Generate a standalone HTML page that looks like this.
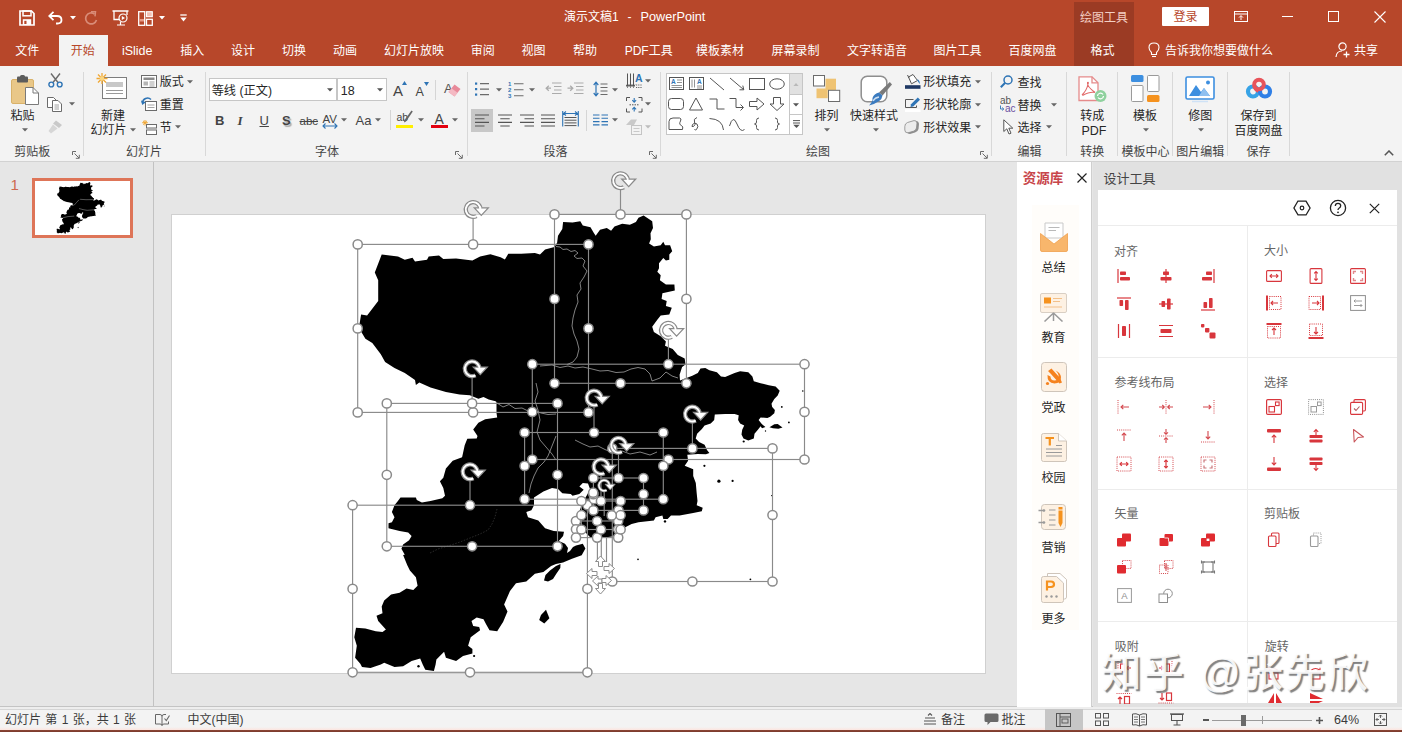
<!DOCTYPE html>
<html lang="zh-CN">
<head>
<meta charset="utf-8">
<title>演示文稿1 - PowerPoint</title>
<style>
*{box-sizing:border-box;margin:0;padding:0}
html,body{width:1402px;height:732px;overflow:hidden;background:#e6e6e6}
body{font-family:"Liberation Sans","Noto Sans CJK SC",sans-serif;font-size:12px;color:#262626;position:relative}
.abs{position:absolute}
.t{position:absolute;white-space:nowrap;line-height:1}
#titlebar{position:absolute;left:0;top:0;width:1402px;height:66px;background:#b7472a}
#ctx{position:absolute;left:1073.5px;top:2px;width:60px;height:64px;background:#9b3b24}
#tabactive{position:absolute;left:59px;top:35px;width:49px;height:32px;background:#f3f3f3}
.tab{position:absolute;top:42.6px;font-size:12px;color:#fff;white-space:nowrap;line-height:16px}
#ribbon{position:absolute;left:0;top:66px;width:1402px;height:96px;background:#f3f3f3;border-bottom:1px solid #d2d2d2}
.gsep{position:absolute;top:72px;width:1px;height:84px;background:#d9d9d9}
.glabel{position:absolute;top:143px;font-size:12.5px;color:#444;white-space:nowrap;line-height:15px}
.rt{position:absolute;font-size:12.5px;color:#262626;white-space:nowrap;line-height:15px}
#work{position:absolute;left:0;top:162px;width:1402px;height:544px;background:#e6e6e6;border-bottom:1px solid #c4c4c4;box-sizing:content-box}
#thumbsep{position:absolute;left:153px;top:162px;width:1px;height:544px;background:#c2c2c2}
#slide{position:absolute;left:171px;top:213.6px;width:815.3px;height:460.2px;background:#fff;border:1px solid #d0d0d0}
#status{position:absolute;left:0;top:707px;width:1402px;height:25px;background:#f3f3f3;border-top:2px solid #eee;box-shadow:inset 0 1px 0 #d6d6d6}
#statusline{position:absolute;left:0;top:727px;width:1402px;height:5px;background:linear-gradient(#f3f3f3 0,#fbe6e1 2.6px,#8a4535 3.2px,#7a3a2c 5px)}
#respanel{position:absolute;left:1017px;top:162px;width:75px;height:545px;background:#fff;border-right:1px solid #cfcfcf}
#dthead{position:absolute;left:1093px;top:162px;width:309px;height:545px;background:#e1e1e1}
#dtbody{position:absolute;left:1098px;top:190px;width:299px;height:513px;background:#fff}
.sec{position:absolute;font-size:12px;color:#666;white-space:nowrap;line-height:14px}
.hline{position:absolute;height:1px;background:#ececec}
.vline{position:absolute;width:1px;background:#ececec}
</style>
</head>
<body>
<!-- ===== TITLE BAR + TABS ===== -->
<div id="titlebar"></div>
<div id="ctx"></div>
<div id="tabactive"></div>
<div class="t" style="left:564px;top:9px;font-size:12px;line-height:16px;color:#fff">演示文稿1</div><div class="t" style="left:627.5px;top:9px;font-size:12px;line-height:16px;color:#fff">-</div><div class="t" style="left:640.5px;top:9px;font-size:12.7px;line-height:16px;color:#fff">PowerPoint</div>
<div class="t" style="left:1080px;top:10px;font-size:12px;line-height:16px;color:#f3cfc4">绘图工具</div>
<div class="abs" style="left:1162px;top:7px;width:47px;height:19px;background:#fff;border-radius:1px"></div>
<div class="t" style="left:1173.5px;top:8.5px;font-size:12px;line-height:16px;color:#b7472a">登录</div>
<div class="tab" style="left:15.3px">文件</div>
<div class="tab" style="left:70.7px;color:#b7472a">开始</div>
<div class="tab" style="left:121.9px;font-size:12.5px">iSlide</div>
<div class="tab" style="left:180.3px">插入</div>
<div class="tab" style="left:231px">设计</div>
<div class="tab" style="left:282px">切换</div>
<div class="tab" style="left:333px">动画</div>
<div class="tab" style="left:384.1px">幻灯片放映</div>
<div class="tab" style="left:470.7px">审阅</div>
<div class="tab" style="left:521.5px">视图</div>
<div class="tab" style="left:572.9px">帮助</div>
<div class="tab" style="left:624.7px">PDF工具</div>
<div class="tab" style="left:696px">模板素材</div>
<div class="tab" style="left:771.5px">屏幕录制</div>
<div class="tab" style="left:847px">文字转语音</div>
<div class="tab" style="left:933.5px">图片工具</div>
<div class="tab" style="left:1008.5px">百度网盘</div>
<div class="tab" style="left:1090.5px">格式</div>
<div class="tab" style="left:1165px">告诉我你想要做什么</div>
<div class="tab" style="left:1354px">共享</div>
<!-- ===== RIBBON ===== -->
<div id="ribbon"></div>
<!-- ===== WORK AREA ===== -->
<div id="work"></div>
<div id="thumbsep"></div>
<div class="t" style="left:10.5px;top:176.5px;font-size:15px;color:#cd6a4f">1</div>
<div class="abs" style="left:32px;top:178px;width:101px;height:60px;background:#fff;border:3px solid #de7558"></div>
<div id="slide"></div>
<!-- ===== RIGHT PANELS ===== -->
<div id="respanel"></div>
<div id="dthead"></div>
<div id="dtbody"></div>
<!-- ===== STATUS ===== -->
<div id="status"></div>
<div id="statusline"></div>
<!-- QAT icons -->
<svg class="abs" style="left:19px;top:10px" width="16" height="16" viewBox="0 0 16 16"><path d="M1,1 H12.5 L15,3.5 V15 H1 Z" fill="none" stroke="#fff" stroke-width="1.7"/><rect x="4" y="1" width="8" height="4.8" fill="none" stroke="#fff" stroke-width="1.5"/><rect x="3.8" y="9.2" width="8.4" height="5.8" fill="#fff"/><rect x="5.3" y="10.8" width="2.2" height="3.2" fill="#b7472a"/></svg>
<svg class="abs" style="left:48px;top:10.5px" width="15" height="14" viewBox="0 0 15 14"><path d="M1.5,5 H9 Q13.5,5 13.5,9 Q13.5,12.5 9.5,12.5 H8" fill="none" stroke="#fff" stroke-width="1.8"/><path d="M5.5,0.8 L1.2,5 L5.5,9.2" fill="none" stroke="#fff" stroke-width="1.8"/></svg>
<svg class="abs" style="left:69.5px;top:15.5px" width="6" height="4" viewBox="0 0 6 4"><path d="M0,0 H6 L3,3.6 Z" fill="#fff"/></svg>
<svg class="abs" style="left:83.5px;top:10.5px" width="15" height="14" viewBox="0 0 15 14"><path d="M10.5,3 A5.5,5.5 0 1 0 12.5,9" fill="none" stroke="#d98c78" stroke-width="1.7"/><path d="M7,0.5 L11.5,0.8 L11,5.3" fill="none" stroke="#d98c78" stroke-width="1.5"/></svg>
<svg class="abs" style="left:112px;top:10px" width="17" height="16" viewBox="0 0 17 16"><path d="M0.5,1 H16.5 M2,1 V9.5 H7 M15,1 V5" fill="none" stroke="#fff" stroke-width="1.3"/><circle cx="11" cy="8" r="4" fill="none" stroke="#fff" stroke-width="1.2"/><path d="M9.8,6 L13,8 L9.8,10 Z" fill="#fff"/><path d="M8.5,12 V14.5 M5,15 H13" stroke="#fff" stroke-width="1.2"/></svg>
<svg class="abs" style="left:138px;top:10.5px" width="15" height="15" viewBox="0 0 15 15"><rect x="0.7" y="0.7" width="6" height="13.6" fill="none" stroke="#fff" stroke-width="1.3"/><rect x="8.5" y="0.7" width="5.8" height="5" fill="#f3c0b3" stroke="#fff" stroke-width="1.1"/><rect x="8.5" y="8.3" width="5.8" height="6" fill="none" stroke="#fff" stroke-width="1.3"/><rect x="1.5" y="8" width="4.5" height="2.5" fill="#e79a86"/></svg>
<svg class="abs" style="left:159px;top:15.5px" width="6" height="4" viewBox="0 0 6 4"><path d="M0,0 H6 L3,3.6 Z" fill="#fff"/></svg>
<svg class="abs" style="left:179.5px;top:13.5px" width="7" height="8" viewBox="0 0 7 8"><path d="M0.3,1 H6.7" stroke="#fff" stroke-width="1.3"/><path d="M0.3,3.6 H6.7 L3.5,7.4 Z" fill="#fff"/></svg>
<!-- window controls -->
<svg class="abs" style="left:1234px;top:10.5px" width="14" height="11" viewBox="0 0 14 11"><rect x="0.5" y="0.5" width="13" height="10" fill="none" stroke="#fff"/><path d="M0.5,3 H13.5" stroke="#fff"/><path d="M7,9 V4.8 M5,6.6 L7,4.6 L9,6.6" fill="none" stroke="#fff"/></svg>
<div class="abs" style="left:1281.5px;top:16px;width:11px;height:1px;background:#fff"></div>
<div class="abs" style="left:1328px;top:11px;width:10.5px;height:10.5px;border:1px solid #fff"></div>
<svg class="abs" style="left:1373.5px;top:10.5px" width="12" height="12" viewBox="0 0 12 12"><path d="M0.5,0.5 L11.5,11.5 M11.5,0.5 L0.5,11.5" stroke="#fff" stroke-width="1.1"/></svg>
<!-- lightbulb -->
<svg class="abs" style="left:1147.5px;top:42px" width="12" height="16" viewBox="0 0 12 16"><path d="M3.5,10.5 Q1,8.5 1,5.6 Q1,1 6,1 Q11,1 11,5.6 Q11,8.5 8.5,10.5 V12.5 H3.5 Z" fill="none" stroke="#fff" stroke-width="1.1"/><path d="M4,14.5 H8" stroke="#fff" stroke-width="1.1"/></svg>
<!-- share person -->
<svg class="abs" style="left:1335px;top:42px" width="16" height="16" viewBox="0 0 16 16"><circle cx="7.5" cy="4.5" r="3.6" fill="none" stroke="#fff" stroke-width="1.2"/><path d="M1,15 Q1.5,9 7,9" fill="none" stroke="#fff" stroke-width="1.2"/><path d="M11.5,9.5 V15.5 M8.5,12.5 H14.5" stroke="#fff" stroke-width="1.3"/></svg>
<svg class="abs" style="left:11.0px;top:75.0px" width="28" height="30" viewBox="0 0 28 30"><rect x="0.5" y="4.5" width="22" height="24" rx="1.5" fill="#e9c788" stroke="#d9b26a"/><rect x="6" y="1.5" width="11" height="6" rx="1" fill="#5c5c5c"/><rect x="9" y="0" width="5" height="3.5" rx="1.5" fill="#5c5c5c"/><path d="M14.5,12.5 H22 L27.5,18 V29.5 H14.5 Z" fill="#fff" stroke="#7a7a7a"/><path d="M22,12.5 V18 H27.5" fill="none" stroke="#7a7a7a"/></svg>
<div class="t" style="left:10.5px;top:108.2px;font-size:12px;line-height:16px;color:#262626;">粘贴</div>
<svg class="abs" style="left:21.7px;top:128.2px" width="6" height="4" viewBox="0 0 6 4"><path d="M0,0.3 L6,0.3 L3,3.6 Z" fill="#666"/></svg>
<svg class="abs" style="left:48.0px;top:73.0px" width="15" height="15" viewBox="0 0 15 15"><path d="M3,0.5 L10,9.5 M12,0.5 L5,9.5" stroke="#6b6b6b" stroke-width="1.4" fill="none"/><circle cx="3.3" cy="11.5" r="2.4" fill="none" stroke="#2e74b5" stroke-width="1.4"/><circle cx="11.7" cy="11.5" r="2.4" fill="none" stroke="#2e74b5" stroke-width="1.4"/></svg>
<svg class="abs" style="left:47.0px;top:97.0px" width="15" height="15" viewBox="0 0 15 15"><path d="M0.5,0.5 H6.5 L9,3 V10.5 H0.5 Z" fill="#fff" stroke="#6b6b6b"/><path d="M5.5,3.5 H11 L14.5,7 V14.5 H5.5 Z" fill="#fff" stroke="#6b6b6b"/><path d="M7.5,8 H12 M7.5,10 H12 M7.5,12 H12" stroke="#8a8a8a" stroke-width="0.8"/></svg>
<svg class="abs" style="left:68.6px;top:102.4px" width="6" height="4" viewBox="0 0 6 4"><path d="M0,0.3 L6,0.3 L3,3.6 Z" fill="#666"/></svg>
<svg class="abs" style="left:48.0px;top:120.0px" width="15" height="14" viewBox="0 0 15 14"><path d="M8,0.5 L14,5 L11,8 L5,3.5 Z" fill="#c9c9c9"/><path d="M5,4.5 L9.5,8.5 L3,13.5 L0.5,11 Z" fill="#d6d6d6"/></svg>
<div class="t" style="left:14.2px;top:143.8px;font-size:12px;line-height:16px;color:#444;">剪贴板</div>
<svg class="abs" style="left:72.0px;top:151.0px" width="8" height="8" viewBox="0 0 8 8"><path d="M0.5,4 V0.5 H4 M2.5,2.5 L7,7 M7.3,3.8 V7.3 H3.8" fill="none" stroke="#6b6b6b" stroke-width="1"/></svg>
<div class="abs" style="left:83.0px;top:72px;width:1px;height:84px;background:#d8d8d8"></div>
<svg class="abs" style="left:96.0px;top:73.0px" width="32" height="28" viewBox="0 0 32 28"><rect x="6.5" y="4.5" width="24" height="21" fill="#fff" stroke="#7d7d7d"/><rect x="10" y="9" width="17" height="5" fill="#c8c8c8"/><path d="M10,17.5 H27 M10,20.5 H27" stroke="#9a9a9a"/><g stroke="#f0a733" stroke-width="1.3"><path d="M6,0 V11 M0.5,5.5 H11.5 M2,1.5 L10,9.5 M10,1.5 L2,9.5"/></g><circle cx="6" cy="5.5" r="2.2" fill="#fbd680"/></svg>
<div class="t" style="left:101.0px;top:108.2px;font-size:12px;line-height:16px;color:#262626;">新建</div>
<div class="t" style="left:90.4px;top:122.4px;font-size:12px;line-height:16px;color:#262626;">幻灯片</div>
<svg class="abs" style="left:129.6px;top:128.2px" width="6" height="4" viewBox="0 0 6 4"><path d="M0,0.3 L6,0.3 L3,3.6 Z" fill="#666"/></svg>
<svg class="abs" style="left:141.0px;top:74.5px" width="16" height="13" viewBox="0 0 16 13"><rect x="0.5" y="0.5" width="15" height="12" fill="#fff" stroke="#6b6b6b"/><rect x="2.5" y="2.5" width="11" height="2.5" fill="#8a8a8a"/><rect x="2.5" y="6.5" width="4.5" height="4" fill="#b5b5b5"/><path d="M8.5,7 H13.5 M8.5,9 H13.5 M8.5,11 H13.5" stroke="#8a8a8a" stroke-width="0.8"/></svg>
<div class="t" style="left:159.8px;top:74.2px;font-size:12px;line-height:16px;color:#262626;">版式</div>
<svg class="abs" style="left:187.2px;top:79.7px" width="6" height="4" viewBox="0 0 6 4"><path d="M0,0.3 L6,0.3 L3,3.6 Z" fill="#666"/></svg>
<svg class="abs" style="left:141.0px;top:97.0px" width="16" height="14" viewBox="0 0 16 14"><rect x="4.5" y="4.5" width="11" height="9" fill="#fff" stroke="#6b6b6b"/><path d="M6.5,8 H13.5 M6.5,10.5 H13.5" stroke="#9a9a9a" stroke-width="0.9"/><path d="M1.5,6 A5,5 0 0 1 10,2.5" fill="none" stroke="#2e74b5" stroke-width="1.5"/><path d="M0,3.5 L1.2,8 L5,5.2 Z" fill="#2e74b5"/></svg>
<div class="t" style="left:159.8px;top:97.4px;font-size:12px;line-height:16px;color:#262626;">重置</div>
<svg class="abs" style="left:142.0px;top:120.0px" width="15" height="15" viewBox="0 0 15 15"><path d="M3,0 V5.5 M0.2,2.7 H5.8 M1,0.8 L5,4.7 M5,0.8 L1,4.7" stroke="#f0a733" stroke-width="1"/><rect x="4.5" y="4.5" width="10" height="3.5" fill="#fff" stroke="#6b6b6b"/><rect x="4.5" y="10" width="10" height="4.5" fill="#fff" stroke="#6b6b6b"/></svg>
<div class="t" style="left:159.8px;top:119.9px;font-size:12px;line-height:16px;color:#262626;">节</div>
<svg class="abs" style="left:175.2px;top:125.4px" width="6" height="4" viewBox="0 0 6 4"><path d="M0,0.3 L6,0.3 L3,3.6 Z" fill="#666"/></svg>
<div class="t" style="left:126.0px;top:143.8px;font-size:12px;line-height:16px;color:#444;">幻灯片</div>
<div class="abs" style="left:204.5px;top:72px;width:1px;height:84px;background:#d8d8d8"></div>
<div class="abs" style="left:209px;top:78px;width:128px;height:22.5px;background:#fff;border:1px solid #c6c6c6"></div>
<div class="abs" style="left:337px;top:78px;width:50px;height:22.5px;background:#fff;border:1px solid #c6c6c6;border-left:1px solid #c6c6c6"></div>
<div class="t" style="left:211.7px;top:82.7px;font-size:12.2px;line-height:16px;color:#262626;">等线 (正文)</div>
<svg class="abs" style="left:326.5px;top:88.0px" width="6" height="4" viewBox="0 0 6 4"><path d="M0,0.3 L6,0.3 L3,3.6 Z" fill="#555"/></svg>
<div class="t" style="left:340.7px;top:82.7px;font-size:12.5px;line-height:16px;color:#262626;">18</div>
<svg class="abs" style="left:376.5px;top:88.0px" width="6" height="4" viewBox="0 0 6 4"><path d="M0,0.3 L6,0.3 L3,3.6 Z" fill="#555"/></svg>
<div class="t" style="left:215.0px;top:112.9px;font-size:13px;line-height:16px;color:#444;font-weight:bold">B</div>
<div class="t" style="left:237.5px;top:112.9px;font-size:13px;line-height:16px;color:#444;font-style:italic;font-family:'Liberation Serif',serif;font-weight:bold">I</div>
<div class="t" style="left:259.5px;top:112.9px;font-size:13px;line-height:16px;color:#444;text-decoration:underline">U</div>
<div class="t" style="left:282.0px;top:112.9px;font-size:13px;line-height:16px;color:#444;font-weight:bold;text-shadow:1.5px 1.5px 1px #aaa">S</div>
<div class="t" style="left:299.5px;top:112.9px;font-size:11.5px;line-height:16px;color:#444;text-decoration:line-through">abc</div>
<div class="t" style="left:322.5px;top:110.5px;font-size:11.5px;line-height:16px;color:#444;">AV</div>
<svg class="abs" style="left:322.0px;top:123.0px" width="16" height="6" viewBox="0 0 16 6"><path d="M1,3 H15 M3.5,0.5 L1,3 L3.5,5.5 M12.5,0.5 L15,3 L12.5,5.5" fill="none" stroke="#2e74b5" stroke-width="1.1"/></svg>
<svg class="abs" style="left:341.0px;top:118.0px" width="6" height="4" viewBox="0 0 6 4"><path d="M0,0.3 L6,0.3 L3,3.6 Z" fill="#666"/></svg>
<div class="t" style="left:355.5px;top:112.9px;font-size:13px;line-height:16px;color:#444;">Aa</div>
<svg class="abs" style="left:374.5px;top:118.0px" width="6" height="4" viewBox="0 0 6 4"><path d="M0,0.3 L6,0.3 L3,3.6 Z" fill="#666"/></svg>
<div class="t" style="left:393.0px;top:82.5px;font-size:15px;line-height:16px;color:#444;">A</div>
<svg class="abs" style="left:402.0px;top:81.0px" width="5" height="4" viewBox="0 0 5 4"><path d="M0,4 L2.5,0 L5,4 Z" fill="#2e74b5"/></svg>
<div class="t" style="left:415.5px;top:83.5px;font-size:12.5px;line-height:16px;color:#444;">A</div>
<svg class="abs" style="left:424.0px;top:81.5px" width="5" height="4" viewBox="0 0 5 4"><path d="M0,0 L2.5,4 L5,0 Z" fill="#2e74b5"/></svg>
<div class="abs" style="left:434.5px;top:80px;width:1px;height:20px;background:#d5d5d5"></div>
<div class="t" style="left:444.0px;top:81.0px;font-size:13px;line-height:16px;color:#555;">A</div>
<svg class="abs" style="left:448.0px;top:84.0px" width="13" height="13" viewBox="0 0 13 13"><path d="M6.5,0.5 L12.5,5 L6.5,12.5 L0.5,8 Z" fill="#e88a9a"/><path d="M0.5,8 L3.5,4.2 L9.5,8.7 L6.5,12.5 Z" fill="#f4b9c3"/></svg>
<div class="abs" style="left:390.0px;top:110px;width:1px;height:20px;background:#d5d5d5"></div>
<div class="t" style="left:396.5px;top:109.0px;font-size:10.5px;line-height:16px;color:#444;">ab</div>
<svg class="abs" style="left:403.0px;top:110.0px" width="10" height="13" viewBox="0 0 10 13"><path d="M8.5,0.5 L9.8,1.6 L3,11.5 L1,12.5 L1.3,10.2 Z" fill="#666"/></svg>
<div class="abs" style="left:395.5px;top:124.5px;width:17.5px;height:3.5px;background:#ffef00"></div>
<svg class="abs" style="left:418.4px;top:118.0px" width="6" height="4" viewBox="0 0 6 4"><path d="M0,0.3 L6,0.3 L3,3.6 Z" fill="#666"/></svg>
<div class="t" style="left:434.5px;top:110.5px;font-size:14px;line-height:16px;color:#444;">A</div>
<div class="abs" style="left:431px;top:124.5px;width:16.5px;height:3.5px;background:#e3000f"></div>
<svg class="abs" style="left:452.3px;top:118.0px" width="6" height="4" viewBox="0 0 6 4"><path d="M0,0.3 L6,0.3 L3,3.6 Z" fill="#666"/></svg>
<div class="t" style="left:315.0px;top:143.8px;font-size:12px;line-height:16px;color:#444;">字体</div>
<svg class="abs" style="left:455.0px;top:151.0px" width="8" height="8" viewBox="0 0 8 8"><path d="M0.5,4 V0.5 H4 M2.5,2.5 L7,7 M7.3,3.8 V7.3 H3.8" fill="none" stroke="#6b6b6b" stroke-width="1"/></svg>
<div class="abs" style="left:466.5px;top:72px;width:1px;height:84px;background:#d8d8d8"></div>
<svg class="abs" style="left:474.5px;top:81.0px" width="15" height="16" viewBox="0 0 15 16"><g fill="#2e74b5"><rect x="0" y="1.5" width="2.2" height="2.2"/><rect x="0" y="7" width="2.2" height="2.2"/><rect x="0" y="12.5" width="2.2" height="2.2"/></g><path d="M5,2.6 H14 M5,8.1 H14 M5,13.6 H14" stroke="#6b6b6b" stroke-width="1.1"/></svg>
<svg class="abs" style="left:495.5px;top:87.5px" width="6" height="4" viewBox="0 0 6 4"><path d="M0,0.3 L6,0.3 L3,3.6 Z" fill="#666"/></svg>
<svg class="abs" style="left:507.5px;top:80.5px" width="16" height="17" viewBox="0 0 16 17"><g fill="#2e74b5" font-family="Liberation Sans" font-size="6" font-weight="bold"><text x="0" y="5">1</text><text x="0" y="11">2</text><text x="0" y="17">3</text></g><path d="M6,2.8 H15.5 M6,8.8 H15.5 M6,14.8 H15.5" stroke="#6b6b6b" stroke-width="1.1"/></svg>
<svg class="abs" style="left:529.2px;top:87.5px" width="6" height="4" viewBox="0 0 6 4"><path d="M0,0.3 L6,0.3 L3,3.6 Z" fill="#666"/></svg>
<svg class="abs" style="left:544.5px;top:82.0px" width="17" height="14" viewBox="0 0 17 14"><path d="M7,1 H16.5 M9,4.5 H16.5 M9,8 H16.5 M7,11.5 H16.5" stroke="#ababab" stroke-width="1.1"/><path d="M6,6.2 H1.5 M3.8,3.7 L1.2,6.2 L3.8,8.7" fill="none" stroke="#ababab" stroke-width="1.3"/></svg>
<svg class="abs" style="left:566.5px;top:82.0px" width="17" height="14" viewBox="0 0 17 14"><path d="M7,1 H16.5 M9,4.5 H16.5 M9,8 H16.5 M7,11.5 H16.5" stroke="#ababab" stroke-width="1.1"/><path d="M0.5,6.2 H5.5 M3.2,3.7 L5.8,6.2 L3.2,8.7" fill="none" stroke="#ababab" stroke-width="1.3"/></svg>
<svg class="abs" style="left:592.5px;top:81.0px" width="15" height="16" viewBox="0 0 15 16"><path d="M3,1.5 V14.5 M0.7,4 L3,1.2 L5.3,4 M0.7,12 L3,14.8 L5.3,12" fill="none" stroke="#2e74b5" stroke-width="1.2"/><path d="M7.5,3 H14.5 M7.5,6.5 H14.5 M7.5,10 H14.5 M7.5,13.5 H14.5" stroke="#6b6b6b" stroke-width="1.1"/></svg>
<svg class="abs" style="left:611.6px;top:87.5px" width="6" height="4" viewBox="0 0 6 4"><path d="M0,0.3 L6,0.3 L3,3.6 Z" fill="#666"/></svg>
<svg class="abs" style="left:625.5px;top:72.5px" width="17" height="17" viewBox="0 0 17 17"><path d="M1.5,0.5 V13 M4.5,0.5 V13 M7.5,0.5 V13" stroke="#555" stroke-width="1"/><path d="M0,11.5 L1.5,14.5 L3,11.5 M3,11.5 L4.5,14.5 L6,11.5 M6,11.5 L7.5,14.5 L9,11.5" fill="none" stroke="#555" stroke-width="0.9"/><text x="9" y="9" font-family="Liberation Sans" font-size="10.5" font-weight="bold" fill="#2e74b5">A</text><path d="M10,12 H16 M10,14.5 H16" stroke="#555" stroke-width="0.9" stroke-dasharray="1.2 1"/></svg>
<svg class="abs" style="left:645.3px;top:79.2px" width="6" height="4" viewBox="0 0 6 4"><path d="M0,0.3 L6,0.3 L3,3.6 Z" fill="#666"/></svg>
<svg class="abs" style="left:625.5px;top:97.0px" width="17" height="16" viewBox="0 0 17 16"><path d="M0.5,4 V0.5 H4 M12.5,0.5 H16 V4 M0.5,11.5 V15 H4 M12.5,15 H16 V11.5" fill="none" stroke="#555" stroke-width="1"/><path d="M8.2,1 V5 M6.3,3.2 L8.2,5.3 L10.1,3.2 M8.2,14.5 V10.5 M6.3,12.3 L8.2,10.2 L10.1,12.3" fill="none" stroke="#2e74b5" stroke-width="1.1"/><path d="M3.5,7.8 H13" stroke="#555" stroke-width="1" stroke-dasharray="1.5 1"/></svg>
<svg class="abs" style="left:645.3px;top:102.4px" width="6" height="4" viewBox="0 0 6 4"><path d="M0,0.3 L6,0.3 L3,3.6 Z" fill="#666"/></svg>
<svg class="abs" style="left:625.0px;top:119.0px" width="18" height="16" viewBox="0 0 18 16"><path d="M1,6 L6,0.5 H12 L9,6 Z" fill="#c9c9c9"/><rect x="6.5" y="6.5" width="10" height="9" fill="#f3f3f3" stroke="#c4c4c4"/><path d="M8.5,9.5 H14.5 M8.5,12.5 H14.5" stroke="#c9c9c9"/></svg>
<svg class="abs" style="left:645.3px;top:124.9px" width="6" height="4" viewBox="0 0 6 4"><path d="M0,0.3 L6,0.3 L3,3.6 Z" fill="#bdbdbd"/></svg>
<div class="abs" style="left:471px;top:109px;width:22px;height:23px;background:#c8c8c8"></div>
<svg class="abs" style="left:475.0px;top:113.5px" width="14" height="13" viewBox="0 0 14 13"><path d="M0,1 H14 M0,4.7 H9.5 M0,8.4 H14 M0,12 H9.5" stroke="#555" stroke-width="1.1"/></svg>
<svg class="abs" style="left:497.5px;top:113.5px" width="14" height="13" viewBox="0 0 14 13"><path d="M0,1 H14 M2.3,4.7 H11.7 M0,8.4 H14 M2.3,12 H11.7" stroke="#555" stroke-width="1.1"/></svg>
<svg class="abs" style="left:519.5px;top:113.5px" width="14" height="13" viewBox="0 0 14 13"><path d="M0,1 H14 M4.5,4.7 H14 M0,8.4 H14 M4.5,12 H14" stroke="#555" stroke-width="1.1"/></svg>
<svg class="abs" style="left:541.0px;top:113.5px" width="14" height="13" viewBox="0 0 14 13"><path d="M0,1 H14 M0,4.7 H14 M0,8.4 H14 M0,12 H14" stroke="#555" stroke-width="1.1"/></svg>
<svg class="abs" style="left:561.5px;top:111.0px" width="17" height="16" viewBox="0 0 17 16"><path d="M2,2.5 H15 M4,0.5 L1.5,2.5 L4,4.5 M13,0.5 L15.5,2.5 L13,4.5 M0.7,0 V15.5 M16.3,0 V15.5" fill="none" stroke="#2e74b5" stroke-width="1.1"/><path d="M2.5,6.5 H14.5 M2.5,9.2 H14.5 M2.5,11.9 H14.5 M2.5,14.6 H14.5" stroke="#555" stroke-width="1"/></svg>
<div class="abs" style="left:586.0px;top:110px;width:1px;height:21px;background:#d5d5d5"></div>
<svg class="abs" style="left:593.0px;top:114.0px" width="15" height="12" viewBox="0 0 15 12"><path d="M0,1 H6.5 M0,4.3 H6.5 M0,7.6 H6.5 M0,10.9 H6.5 M8.5,1 H15 M8.5,4.3 H15 M8.5,7.6 H15 M8.5,10.9 H15" stroke="#2e74b5" stroke-width="1.1"/></svg>
<svg class="abs" style="left:612.1px;top:118.0px" width="6" height="4" viewBox="0 0 6 4"><path d="M0,0.3 L6,0.3 L3,3.6 Z" fill="#666"/></svg>
<div class="t" style="left:543.5px;top:143.8px;font-size:12px;line-height:16px;color:#444;">段落</div>
<svg class="abs" style="left:649.0px;top:151.0px" width="8" height="8" viewBox="0 0 8 8"><path d="M0.5,4 V0.5 H4 M2.5,2.5 L7,7 M7.3,3.8 V7.3 H3.8" fill="none" stroke="#6b6b6b" stroke-width="1"/></svg>
<div class="abs" style="left:660.3px;top:72px;width:1px;height:84px;background:#d8d8d8"></div>
<div class="abs" style="left:666px;top:73px;width:137px;height:62px;background:#fff;border:1px solid #c6c6c6"></div>
<div class="abs" style="left:788.5px;top:73px;width:14.5px;height:62px;border:1px solid #c6c6c6;background:#fff"></div>
<div class="abs" style="left:789.5px;top:74px;width:12.5px;height:20px;background:#e1e1e1"></div>
<div class="abs" style="left:788.5px;top:94px;width:14.5px;height:1px;background:#c6c6c6"></div>
<div class="abs" style="left:788.5px;top:113.5px;width:14.5px;height:1px;background:#c6c6c6"></div>
<svg class="abs" style="left:793.0px;top:82.5px" width="6" height="3.5" viewBox="0 0 6 3.5"><path d="M0,3.5 L3,0 L6,3.5 Z" fill="#b9b9b9"/></svg>
<svg class="abs" style="left:793.0px;top:102.5px" width="6" height="4" viewBox="0 0 6 4"><path d="M0,0.3 L6,0.3 L3,3.6 Z" fill="#555"/></svg>
<svg class="abs" style="left:792.5px;top:119.5px" width="7" height="8" viewBox="0 0 7 8"><path d="M0,0.6 H7 M0,3 H7" stroke="#555" stroke-width="1"/><path d="M0.3,4.8 H6.7 L3.5,8 Z" fill="#555"/></svg>
<svg class="abs" style="left:668.7px;top:77.2px" width="15" height="13" viewBox="0 0 15 13"><rect x="0.5" y="0.5" width="14" height="12" fill="none" stroke="#555" stroke-width="1"/><text x="2" y="7" font-size="6.5" font-weight="bold" fill="#2e74b5" font-family="Liberation Sans">A</text><path d="M8,3 H13 M8,5.5 H13 M2.5,8.5 H13 M2.5,10.5 H13" stroke="#777" stroke-width="0.8"/></svg>
<svg class="abs" style="left:688.7px;top:77.2px" width="15" height="13" viewBox="0 0 15 13"><rect x="0.5" y="0.5" width="14" height="12" fill="none" stroke="#555" stroke-width="1"/><path d="M3,2.5 V10.5 M5.5,2.5 V10.5" stroke="#777" stroke-width="0.8"/><text x="8" y="7" font-size="6.5" font-weight="bold" fill="#2e74b5" font-family="Liberation Sans">A</text><path d="M8,9 H13 M8,11 H13" stroke="#777" stroke-width="0.8"/></svg>
<svg class="abs" style="left:708.9px;top:76.7px" width="16" height="14" viewBox="0 0 16 14"><path d="M1,1 L15,13" fill="none" stroke="#555" stroke-width="1"/></svg>
<svg class="abs" style="left:728.9px;top:76.7px" width="16" height="14" viewBox="0 0 16 14"><path d="M1,1 L14.5,12.5 M10.5,12.8 L14.8,12.8 L13.8,8.6" fill="none" stroke="#555" stroke-width="1"/></svg>
<svg class="abs" style="left:748.8px;top:76.7px" width="16" height="14" viewBox="0 0 16 14"><rect x="0.5" y="1.5" width="15" height="11" fill="none" stroke="#555" stroke-width="1"/></svg>
<svg class="abs" style="left:768.6px;top:76.7px" width="16" height="14" viewBox="0 0 16 14"><ellipse cx="8" cy="7" rx="7.3" ry="5.2" fill="none" stroke="#555" stroke-width="1"/></svg>
<svg class="abs" style="left:668.2px;top:97.4px" width="16" height="14" viewBox="0 0 16 14"><rect x="0.5" y="1.5" width="15" height="11" rx="3" fill="none" stroke="#555" stroke-width="1"/></svg>
<svg class="abs" style="left:689.2px;top:97.4px" width="14" height="14" viewBox="0 0 14 14"><path d="M7,1 L13.5,13 H0.5 Z" fill="none" stroke="#555" stroke-width="1"/></svg>
<svg class="abs" style="left:708.9px;top:97.4px" width="16" height="14" viewBox="0 0 16 14"><path d="M0.5,2 H8 V12 H15.5" fill="none" stroke="#555" stroke-width="1"/></svg>
<svg class="abs" style="left:728.9px;top:97.4px" width="16" height="14" viewBox="0 0 16 14"><path d="M0.5,1.5 H7 V10.5 H14 M11.5,7.5 L14.5,10.5 L11.5,13.5" fill="none" stroke="#555" stroke-width="1"/></svg>
<svg class="abs" style="left:748.8px;top:97.4px" width="16" height="14" viewBox="0 0 16 14"><path d="M0.5,4.5 H8 V1 L15,7 L8,13 V9.5 H0.5 Z" fill="none" stroke="#555" stroke-width="1"/></svg>
<svg class="abs" style="left:768.6px;top:97.4px" width="16" height="14" viewBox="0 0 16 14"><path d="M4.5,0.5 H11.5 V7 H15 L8,13.5 L1,7 H4.5 Z" fill="none" stroke="#555" stroke-width="1"/></svg>
<svg class="abs" style="left:668.2px;top:117.4px" width="16" height="14" viewBox="0 0 16 14"><path d="M1,12.5 V4.5 Q1,1 5,1 H11.5 Q14,1.5 12.5,4 Q10.5,7.5 13.5,8.5 Q15.5,9.5 14.5,12.5 Z" fill="none" stroke="#555" stroke-width="1"/></svg>
<svg class="abs" style="left:688.2px;top:117.4px" width="16" height="14" viewBox="0 0 16 14"><path d="M9,0.5 Q5,2 6.5,5 Q8,8 5.5,9.5 Q3,10.5 4.5,7.5 Q6.5,5 9,7 Q11,9.5 8.5,12.5 Q7.5,14 6.5,12" fill="none" stroke="#555" stroke-width="1"/></svg>
<svg class="abs" style="left:708.9px;top:117.4px" width="16" height="14" viewBox="0 0 16 14"><path d="M0.5,1.5 Q13.5,2 14.5,13" fill="none" stroke="#555" stroke-width="1"/></svg>
<svg class="abs" style="left:728.9px;top:117.4px" width="16" height="14" viewBox="0 0 16 14"><path d="M0.5,9 Q4,-3 8,7 Q11.5,16 15.5,12.5" fill="none" stroke="#555" stroke-width="1"/></svg>
<svg class="abs" style="left:748.8px;top:117.4px" width="16" height="14" viewBox="0 0 16 14"><path d="M10,1 Q7.5,1 7.5,3.5 V5 Q7.5,7 5.5,7 Q7.5,7 7.5,9 V10.5 Q7.5,13 10,13" fill="none" stroke="#555" stroke-width="1"/></svg>
<svg class="abs" style="left:768.6px;top:117.4px" width="16" height="14" viewBox="0 0 16 14"><path d="M6,1 Q8.5,1 8.5,3.5 V5 Q8.5,7 10.5,7 Q8.5,7 8.5,9 V10.5 Q8.5,13 6,13" fill="none" stroke="#555" stroke-width="1"/></svg>
<svg class="abs" style="left:813.0px;top:75.0px" width="28" height="28" viewBox="0 0 28 28"><rect x="12.5" y="3.7" width="10.5" height="11.3" fill="#efc373"/><rect x="3.5" y="13.5" width="11.2" height="9.7" fill="#efc373"/><rect x="0.5" y="0.5" width="11" height="10.5" fill="#fff" stroke="#6b6b6b"/><rect x="15.5" y="15.3" width="11.2" height="11.2" fill="#fff" stroke="#6b6b6b"/></svg>
<div class="t" style="left:814.6px;top:108.2px;font-size:12px;line-height:16px;color:#262626;">排列</div>
<svg class="abs" style="left:824.4px;top:128.4px" width="6" height="4" viewBox="0 0 6 4"><path d="M0,0.3 L6,0.3 L3,3.6 Z" fill="#666"/></svg>
<svg class="abs" style="left:860.0px;top:75.0px" width="32" height="31" viewBox="0 0 32 31"><rect x="1.2" y="1.2" width="25.6" height="25.6" rx="6" fill="#fff" stroke="#8e8e8e" stroke-width="1.5"/><path d="M29.8,7 L32,9.5 L22.5,20.5 L19,17.5 Z" fill="#7a7a7a"/><path d="M19,17.5 L22.5,20.5 Q22,27 9,30.5 Q13,26.5 12.5,23 Q14,18.5 19,17.5 Z" fill="#3b7bbf"/><path d="M13,26 Q15,22.5 19,22" stroke="#cfe0f2" fill="none" stroke-width="1.3"/></svg>
<div class="t" style="left:850.0px;top:108.2px;font-size:12px;line-height:16px;color:#262626;">快速样式</div>
<svg class="abs" style="left:872.6px;top:128.4px" width="6" height="4" viewBox="0 0 6 4"><path d="M0,0.3 L6,0.3 L3,3.6 Z" fill="#666"/></svg>
<svg class="abs" style="left:904.5px;top:73.5px" width="16" height="15" viewBox="0 0 16 15"><path d="M3.5,3 L8,0.5 L12.5,6.5 L6.5,9.8 Z" fill="#fff" stroke="#555" stroke-width="1"/><path d="M4,4 L2.5,1" stroke="#555"/><path d="M12.5,5 Q15.5,7.5 14.5,10 Q13.5,8 12.5,6.8 Z" fill="#2e74b5"/><rect x="0" y="11.2" width="15.5" height="3.6" fill="#1f3864"/></svg>
<div class="t" style="left:923.3px;top:74.3px;font-size:12px;line-height:16px;color:#262626;">形状填充</div>
<svg class="abs" style="left:974.5px;top:79.5px" width="6" height="4" viewBox="0 0 6 4"><path d="M0,0.3 L6,0.3 L3,3.6 Z" fill="#666"/></svg>
<svg class="abs" style="left:904.5px;top:96.5px" width="16" height="15" viewBox="0 0 16 15"><path d="M0.5,2.5 H8.5 M0.5,2.5 V10.5 H11.5 V8.5" fill="none" stroke="#555" stroke-width="1"/><path d="M12.8,0.5 L15,2.7 L8.2,9.5 L5.5,10 L6,7.3 Z" fill="#2e74b5"/><rect x="0" y="12.3" width="15.5" height="2.7" fill="#fff"/></svg>
<div class="t" style="left:923.3px;top:97.3px;font-size:12px;line-height:16px;color:#262626;">形状轮廓</div>
<svg class="abs" style="left:974.5px;top:102.6px" width="6" height="4" viewBox="0 0 6 4"><path d="M0,0.3 L6,0.3 L3,3.6 Z" fill="#666"/></svg>
<svg class="abs" style="left:904.0px;top:119.5px" width="16" height="15" viewBox="0 0 16 15"><path d="M3,8.5 Q3,5 6,3.5 L11.5,1 Q14.5,0.5 15,4 L14.5,9 Q14,11.5 11,12.5 L6,14 Q3,14 3,11 Z" fill="#8e8e8e"/><path d="M0.8,6.5 Q0.8,3.5 3.5,2.5 L10,0.6 Q12.8,0.3 13,3 L12.5,8 Q12,10.5 9.5,11.2 L4,12.8 Q0.8,13 0.8,10 Z" fill="#ececec" stroke="#8a8a8a" stroke-width="0.8"/></svg>
<div class="t" style="left:923.3px;top:120.3px;font-size:12px;line-height:16px;color:#262626;">形状效果</div>
<svg class="abs" style="left:974.5px;top:125.3px" width="6" height="4" viewBox="0 0 6 4"><path d="M0,0.3 L6,0.3 L3,3.6 Z" fill="#666"/></svg>
<div class="t" style="left:806.0px;top:143.8px;font-size:12px;line-height:16px;color:#444;">绘图</div>
<svg class="abs" style="left:980.0px;top:151.0px" width="8" height="8" viewBox="0 0 8 8"><path d="M0.5,4 V0.5 H4 M2.5,2.5 L7,7 M7.3,3.8 V7.3 H3.8" fill="none" stroke="#6b6b6b" stroke-width="1"/></svg>
<div class="abs" style="left:991.0px;top:72px;width:1px;height:84px;background:#d8d8d8"></div>
<svg class="abs" style="left:999.5px;top:75.0px" width="13" height="13" viewBox="0 0 13 13"><circle cx="8" cy="5" r="4" fill="none" stroke="#2e74b5" stroke-width="1.5"/><path d="M5.2,7.8 L0.8,12.2" stroke="#2e74b5" stroke-width="2"/></svg>
<div class="t" style="left:1017.6px;top:74.7px;font-size:12px;line-height:16px;color:#262626;">查找</div>
<svg class="abs" style="left:998.5px;top:96.0px" width="17" height="16" viewBox="0 0 17 16"><text x="1" y="7.5" font-size="10" font-family="Liberation Sans" fill="#555">ab</text><text x="6" y="15.5" font-size="10" font-family="Liberation Sans" fill="#6b4fa0">ac</text><path d="M1.5,9.5 V13 H4.5 M3.2,11.5 L4.8,13 L3.2,14.5" fill="none" stroke="#2e74b5" stroke-width="0.9"/></svg>
<div class="t" style="left:1017.6px;top:97.6px;font-size:12px;line-height:16px;color:#262626;">替换</div>
<svg class="abs" style="left:1051.4px;top:102.6px" width="6" height="4" viewBox="0 0 6 4"><path d="M0,0.3 L6,0.3 L3,3.6 Z" fill="#666"/></svg>
<svg class="abs" style="left:1002.5px;top:118.5px" width="11" height="16" viewBox="0 0 11 16"><path d="M0.8,0.8 V12.5 L3.8,9.8 L6,15 L8,14.2 L5.8,9.2 H9.8 Z" fill="#fff" stroke="#555" stroke-width="1"/></svg>
<div class="t" style="left:1017.6px;top:119.8px;font-size:12px;line-height:16px;color:#262626;">选择</div>
<svg class="abs" style="left:1045.6px;top:124.8px" width="6" height="4" viewBox="0 0 6 4"><path d="M0,0.3 L6,0.3 L3,3.6 Z" fill="#666"/></svg>
<div class="t" style="left:1017.6px;top:143.8px;font-size:12px;line-height:16px;color:#444;">编辑</div>
<div class="abs" style="left:1065.8px;top:72px;width:1px;height:84px;background:#d8d8d8"></div>
<svg class="abs" style="left:1077.5px;top:76.0px" width="29" height="27" viewBox="0 0 29 27"><path d="M1,0.8 H14 L20,6.8 V24.5 H1 Z" fill="#fff" stroke="#e58b8b" stroke-width="1.3"/><path d="M14,0.8 V6.8 H20" fill="none" stroke="#e58b8b" stroke-width="1.3"/><path d="M4,19 Q9,14 10,8 Q11,6 9.5,6.5 Q8.5,10 17,16.5 Q12,15.5 4.5,19.5" fill="none" stroke="#e26a6a" stroke-width="1.1"/><circle cx="22.5" cy="20" r="6" fill="#8fd19e"/><path d="M19.5,20 A3,3 0 0 1 25,18.5 M25.5,20 A3,3 0 0 1 20,21.5" fill="none" stroke="#fff" stroke-width="1.2"/></svg>
<div class="t" style="left:1080.2px;top:108.4px;font-size:12px;line-height:16px;color:#262626;">转成</div>
<div class="t" style="left:1081.4px;top:123.3px;font-size:12.5px;line-height:16px;color:#262626;">PDF</div>
<div class="t" style="left:1080.2px;top:143.8px;font-size:12px;line-height:16px;color:#444;">转换</div>
<div class="abs" style="left:1116.6px;top:72px;width:1px;height:84px;background:#d8d8d8"></div>
<svg class="abs" style="left:1130.5px;top:75.0px" width="29" height="27" viewBox="0 0 29 27"><rect x="0" y="0" width="12.5" height="7" rx="1.5" fill="#3d8fe0"/><rect x="0.5" y="10.5" width="11.5" height="16" rx="1" fill="#fff" stroke="#9a9a9a"/><rect x="16.5" y="0.5" width="11.5" height="16" rx="1" fill="#fff" stroke="#9a9a9a"/><rect x="16" y="20" width="12.5" height="7" rx="1.5" fill="#f5921e"/></svg>
<div class="t" style="left:1132.9px;top:108.4px;font-size:12px;line-height:16px;color:#262626;">模板</div>
<svg class="abs" style="left:1143.2px;top:127.8px" width="6" height="4" viewBox="0 0 6 4"><path d="M0,0.3 L6,0.3 L3,3.6 Z" fill="#666"/></svg>
<div class="t" style="left:1121.5px;top:143.8px;font-size:12px;line-height:16px;color:#444;">模板中心</div>
<div class="abs" style="left:1171.8px;top:72px;width:1px;height:84px;background:#d8d8d8"></div>
<svg class="abs" style="left:1185.0px;top:75.5px" width="30" height="27" viewBox="0 0 30 27"><rect x="1" y="1" width="28" height="22" rx="1.5" fill="#fff" stroke="#3d8fe0" stroke-width="1.6"/><path d="M4,20 L11,9 L16,16 L19,12 L25,20 Z" fill="#3d8fe0"/><path d="M14,20 L19,12 L25,20 Z" fill="#8fc0f0"/><circle cx="23" cy="6.5" r="2" fill="#3d8fe0"/><path d="M7,25.5 H23" stroke="#cfe2f6" stroke-width="1.5"/></svg>
<div class="t" style="left:1188.3px;top:108.4px;font-size:12px;line-height:16px;color:#262626;">修图</div>
<svg class="abs" style="left:1198.2px;top:127.8px" width="6" height="4" viewBox="0 0 6 4"><path d="M0,0.3 L6,0.3 L3,3.6 Z" fill="#666"/></svg>
<div class="t" style="left:1176.3px;top:143.8px;font-size:12px;line-height:16px;color:#444;">图片编辑</div>
<div class="abs" style="left:1227.4px;top:72px;width:1px;height:84px;background:#d8d8d8"></div>
<svg class="abs" style="left:1244.5px;top:77.0px" width="28" height="22" viewBox="0 0 28 22"><circle cx="8" cy="14.5" r="5" fill="none" stroke="#37a3e6" stroke-width="4.2"/><circle cx="20" cy="14.5" r="5" fill="none" stroke="#2f7fe6" stroke-width="4.2"/><circle cx="14" cy="7.5" r="4.8" fill="none" stroke="#e8535a" stroke-width="4"/><path d="M9.3,8.5 Q10,12.5 13.5,14" stroke="#e8535a" stroke-width="4" fill="none"/></svg>
<div class="t" style="left:1240.4px;top:108.4px;font-size:12px;line-height:16px;color:#262626;">保存到</div>
<div class="t" style="left:1234.4px;top:123.3px;font-size:12px;line-height:16px;color:#262626;">百度网盘</div>
<div class="t" style="left:1246.4px;top:143.8px;font-size:12px;line-height:16px;color:#444;">保存</div>
<div class="abs" style="left:1289.4px;top:72px;width:1px;height:84px;background:#d8d8d8"></div>
<svg class="abs" style="left:1384.0px;top:150.0px" width="10" height="6" viewBox="0 0 10 6"><path d="M0.8,5.3 L5,1 L9.2,5.3" fill="none" stroke="#555" stroke-width="1.5"/></svg>
<div class="abs" style="left:1032px;top:205px;width:47px;height:425px;background:#fffdfa"></div>
<div class="t" style="left:1022.8px;top:171.0px;font-size:13.5px;line-height:16px;color:#c8464b;font-weight:bold">资源库</div>
<svg class="abs" style="left:1077px;top:173px" width="10" height="10" viewBox="0 0 10 10"><path d="M0.5,0.5 L9.5,9.5 M9.5,0.5 L0.5,9.5" stroke="#222" stroke-width="1.2"/></svg>
<svg class="abs" style="left:1039.5px;top:222.0px" width="28" height="30" viewBox="0 0 28 30"><path d="M5,1 H23 V16 H5 Z" fill="#fff" stroke="#c9c9c9" stroke-width="1"/><path d="M8.5,5.5 H19.5 M8.5,8.5 H16" stroke="#b9b9b9" stroke-width="1"/><path d="M0.5,11.5 L14,22 L27.5,11.5 V28 Q27.5,29.5 26,29.5 H2 Q0.5,29.5 0.5,28 Z" fill="#f8b66c" stroke="#f0a04b" stroke-width="0.8"/><path d="M5,15 L14,22 L23,15 V12 L14,19 L5,12 Z" fill="#fff" opacity="0.0"/></svg>
<div class="t" style="left:1041.6px;top:260.3px;font-size:12px;line-height:16px;color:#262626;">总结</div>
<svg class="abs" style="left:1039.8px;top:292.8px" width="27" height="29" viewBox="0 0 27 29"><rect x="0.5" y="0.5" width="26" height="19" rx="1.5" fill="#fdf1e3" stroke="#d9cfc4"/><rect x="4" y="4.5" width="7" height="6" fill="#f5921e"/><path d="M13,5.5 H22 M13,8.5 H20 M4,14 H22" stroke="#f3c089" stroke-width="1.2"/><path d="M13.5,19.5 V28 M13,20.5 L4.5,28.5 M14,20.5 L22.5,28.5" stroke="#9a9a9a" stroke-width="1.5" fill="none"/></svg>
<div class="t" style="left:1041.6px;top:330.4px;font-size:12px;line-height:16px;color:#262626;">教育</div>
<svg class="abs" style="left:1040.7px;top:362.3px" width="26" height="30" viewBox="0 0 26 30"><rect x="0.5" y="0.5" width="25" height="29" rx="3" fill="#fdf1e3" stroke="#cfc5ba"/><path d="M6.5,13 Q6,21 13.5,21.5 Q20,21.5 20,15 Q19.5,10.5 14.5,8.5 Q18,11.5 17.5,15 Q17,18.5 13.5,18.5 Q9.5,18.5 9.5,14.5 Z" fill="#f5821e"/><path d="M7,9 L10.5,6.5 L19,16 L21,20.5 L18.5,21.5 L9.5,11.5 Z" fill="#f5821e"/><circle cx="6.5" cy="21.5" r="1.6" fill="#f5821e"/></svg>
<div class="t" style="left:1041.6px;top:400.1px;font-size:12px;line-height:16px;color:#262626;">党政</div>
<svg class="abs" style="left:1040.7px;top:433.2px" width="26" height="29" viewBox="0 0 26 29"><path d="M2.5,0.5 H17.5 L25.5,8 V26.5 Q25.5,28.5 23.5,28.5 H2.5 Q0.5,28.5 0.5,26.5 V2.5 Q0.5,0.5 2.5,0.5 Z" fill="#fdf1e3" stroke="#cfc5ba"/><path d="M17.5,0.5 V8 H25.5" fill="#fff" stroke="#cfc5ba"/><path d="M4.5,5 H13 M8.8,5 V12.5" stroke="#f5921e" stroke-width="2.2"/><path d="M5,16 H21 M5,19.5 H21 M5,23 H21 M15,12.5 H21" stroke="#9a9a9a" stroke-width="1"/></svg>
<div class="t" style="left:1041.6px;top:469.8px;font-size:12px;line-height:16px;color:#262626;">校园</div>
<svg class="abs" style="left:1038.0px;top:503.8px" width="28" height="26" viewBox="0 0 28 26"><rect x="3.5" y="0.5" width="24" height="25" rx="3" fill="#fdf1e3" stroke="#cfc5ba"/><path d="M0.5,6.5 H6 M0.5,18.5 H6" stroke="#9a9a9a" stroke-width="1.5"/><circle cx="6" cy="6.5" r="1.3" fill="#9a9a9a"/><circle cx="6" cy="18.5" r="1.3" fill="#9a9a9a"/><path d="M11,6 H17.5 M11,11 H17.5 M11,16 H17.5 M11,21 H17.5" stroke="#9a9a9a" stroke-width="1.2"/><path d="M20.5,6.5 H24.5 V19 L22.5,23 L20.5,19 Z" fill="#f5921e"/><rect x="20.5" y="3" width="4" height="2.5" fill="#f5921e"/></svg>
<div class="t" style="left:1041.6px;top:540.4px;font-size:12px;line-height:16px;color:#262626;">营销</div>
<svg class="abs" style="left:1041.0px;top:573.3px" width="26" height="30" viewBox="0 0 26 30"><path d="M6.5,0.5 H19 L25.5,6.5 V24 Q25.5,26 23.5,26 H6.5 Z" fill="#fff" stroke="#cfc5ba"/><path d="M2.5,3.5 H15.5 L22.5,10 V27.5 Q22.5,29.5 20.5,29.5 H2.5 Q0.5,29.5 0.5,27.5 V5.5 Q0.5,3.5 2.5,3.5 Z" fill="#fdf1e3" stroke="#cfc5ba"/><path d="M6,17.5 V8.5 H10 Q13,8.5 13,11.3 Q13,14 10,14 H6" fill="none" stroke="#f5921e" stroke-width="2.2"/><circle cx="5.5" cy="23.5" r="1.2" fill="#9a9a9a"/><circle cx="10.5" cy="23.5" r="1.2" fill="#9a9a9a"/><circle cx="15.5" cy="23.5" r="1.2" fill="#9a9a9a"/></svg>
<div class="t" style="left:1041.6px;top:610.5px;font-size:12px;line-height:16px;color:#262626;">更多</div>
<div class="t" style="left:1103.4px;top:170.5px;font-size:13px;line-height:16px;color:#444;">设计工具</div>
<svg class="abs" style="left:1293.3px;top:199.2px" width="18" height="18" viewBox="0 0 18 18"><path d="M9,1 L16,5 V13 L9,17 L2,13 V5 Z" fill="none" stroke="#222" stroke-width="1.3" transform="rotate(30 9 9)"/><circle cx="9" cy="9" r="1.8" fill="none" stroke="#222" stroke-width="1.2"/></svg>
<svg class="abs" style="left:1329.2px;top:199.2px" width="18" height="18" viewBox="0 0 18 18"><circle cx="9" cy="9" r="7.6" fill="none" stroke="#222" stroke-width="1.3"/><path d="M6.3,7 Q6.3,4.3 9,4.3 Q11.7,4.3 11.7,6.8 Q11.7,8.3 10,9.2 Q9,9.8 9,11" fill="none" stroke="#222" stroke-width="1.3"/><circle cx="9" cy="13.3" r="0.9" fill="#222"/></svg>
<svg class="abs" style="left:1368.5px;top:202.7px" width="11" height="11" viewBox="0 0 11 11"><path d="M0.8,0.8 L10.2,10.2 M10.2,0.8 L0.8,10.2" stroke="#222" stroke-width="1.2"/></svg>
<div class="hline" style="left:1098px;top:225px;width:299px"></div>
<div class="hline" style="left:1098px;top:356.5px;width:299px"></div>
<div class="hline" style="left:1098px;top:488.5px;width:299px"></div>
<div class="hline" style="left:1098px;top:620.5px;width:299px"></div>
<div class="vline" style="left:1246.8px;top:226px;height:477px"></div>
<div class="t" style="left:1114.1px;top:243.5px;font-size:12px;line-height:16px;color:#666;">对齐</div>
<div class="t" style="left:1264.1px;top:243.4px;font-size:12px;line-height:16px;color:#666;">大小</div>
<div class="t" style="left:1114.6px;top:375.2px;font-size:12px;line-height:16px;color:#666;">参考线布局</div>
<div class="t" style="left:1264.1px;top:375.2px;font-size:12px;line-height:16px;color:#666;">选择</div>
<div class="t" style="left:1114.6px;top:506.0px;font-size:12px;line-height:16px;color:#666;">矢量</div>
<div class="t" style="left:1264.1px;top:506.0px;font-size:12px;line-height:16px;color:#666;">剪贴板</div>
<div class="t" style="left:1114.7px;top:638.6px;font-size:12px;line-height:16px;color:#666;">吸附</div>
<div class="t" style="left:1264.7px;top:638.6px;font-size:12px;line-height:16px;color:#666;">旋转</div>
<svg class="abs" style="left:1116.4px;top:267.9px" width="16" height="16" viewBox="0 0 16 16"><path d="M2,1 V15" stroke="#d8363c" stroke-width="1.2"/><rect x="4" y="3.5" width="6" height="3.6" rx="0.8" fill="#d8363c"/><rect x="4" y="9" width="10" height="3.6" rx="0.8" fill="#d8363c"/></svg>
<svg class="abs" style="left:1158.3px;top:267.9px" width="16" height="16" viewBox="0 0 16 16"><path d="M8,1 V15" stroke="#d8363c" stroke-width="1.2"/><rect x="5" y="3.5" width="6" height="3.6" rx="0.8" fill="#d8363c"/><rect x="2.5" y="9" width="11" height="3.6" rx="0.8" fill="#d8363c"/></svg>
<svg class="abs" style="left:1199.9px;top:267.9px" width="16" height="16" viewBox="0 0 16 16"><path d="M14,1 V15" stroke="#d8363c" stroke-width="1.2"/><rect x="6" y="3.5" width="6" height="3.6" rx="0.8" fill="#d8363c"/><rect x="2" y="9" width="10" height="3.6" rx="0.8" fill="#d8363c"/></svg>
<svg class="abs" style="left:1116.4px;top:295.9px" width="16" height="16" viewBox="0 0 16 16"><path d="M1,2 H15" stroke="#d8363c" stroke-width="1.2"/><rect x="3.5" y="4" width="3.6" height="6" rx="0.8" fill="#d8363c"/><rect x="9" y="4" width="3.6" height="10" rx="0.8" fill="#d8363c"/></svg>
<svg class="abs" style="left:1158.3px;top:295.9px" width="16" height="16" viewBox="0 0 16 16"><path d="M1,8 H15" stroke="#d8363c" stroke-width="1.2"/><rect x="3.5" y="5" width="3.6" height="6" rx="0.8" fill="#d8363c"/><rect x="9" y="2.5" width="3.6" height="11" rx="0.8" fill="#d8363c"/></svg>
<svg class="abs" style="left:1199.9px;top:295.9px" width="16" height="16" viewBox="0 0 16 16"><path d="M1,14 H15" stroke="#d8363c" stroke-width="1.2"/><rect x="3.5" y="6" width="3.6" height="6" rx="0.8" fill="#d8363c"/><rect x="9" y="2" width="3.6" height="10" rx="0.8" fill="#d8363c"/></svg>
<svg class="abs" style="left:1116.4px;top:323.4px" width="16" height="16" viewBox="0 0 16 16"><path d="M2.5,1 V15 M13.5,1 V15" stroke="#d8363c" stroke-width="1.2"/><rect x="6" y="3" width="4" height="10" rx="0.8" fill="#d8363c"/></svg>
<svg class="abs" style="left:1158.3px;top:323.4px" width="16" height="16" viewBox="0 0 16 16"><path d="M1,2.5 H15 M1,13.5 H15" stroke="#d8363c" stroke-width="1.2"/><rect x="2.5" y="6" width="11" height="4" rx="0.8" fill="#d8363c"/></svg>
<svg class="abs" style="left:1199.9px;top:323.4px" width="16" height="16" viewBox="0 0 16 16"><rect x="1" y="1" width="3.4" height="3.4" rx="0.8" fill="#d8363c"/><rect x="5" y="5" width="4.4" height="4.4" rx="0.8" fill="#d8363c"/><rect x="9.5" y="9.5" width="6" height="6" rx="1" fill="#d8363c"/></svg>
<svg class="abs" style="left:1266.2px;top:267.8px" width="16" height="16" viewBox="0 0 16 16"><rect x="0.6" y="2.6" width="14.8" height="10.8" rx="1" fill="none" stroke="#d8363c" stroke-width="1.1"/><path d="M4,8 H12 M5.8,6.2 L4,8 L5.8,9.8 M10.2,6.2 L12,8 L10.2,9.8" fill="none" stroke="#d8363c" stroke-width="1.1"/></svg>
<svg class="abs" style="left:1308.2px;top:267.8px" width="16" height="16" viewBox="0 0 16 16"><rect x="2.1" y="0.6" width="11.8" height="14.8" rx="1" fill="none" stroke="#d8363c" stroke-width="1.1"/><path d="M8,3.5 V12.5 M6.2,5.3 L8,3.5 L9.8,5.3 M6.2,10.7 L8,12.5 L9.8,10.7" fill="none" stroke="#d8363c" stroke-width="1.1"/></svg>
<svg class="abs" style="left:1350.3px;top:267.8px" width="16" height="16" viewBox="0 0 16 16"><rect x="0.6" y="0.6" width="14.8" height="14.8" rx="1" fill="none" stroke="#d8363c" stroke-width="1.1"/><path d="M3.5,6 V3.5 H6 M10,3.5 H12.5 V6 M12.5,10 V12.5 H10 M6,12.5 H3.5 V10" fill="none" stroke="#e08a8d" stroke-width="1.4"/></svg>
<svg class="abs" style="left:1266.2px;top:295.3px" width="16" height="16" viewBox="0 0 16 16"><rect x="3.5" y="1.5" width="11.5" height="13" fill="none" stroke="#d8363c" stroke-width="1" stroke-dasharray="1 1.1"/><path d="M1,0.5 V15.5" stroke="#d8363c" stroke-width="2"/><path d="M5,8 H12 M7,6 L5,8 L7,10" fill="none" stroke="#d8363c" stroke-width="1.1"/></svg>
<svg class="abs" style="left:1308.2px;top:295.3px" width="16" height="16" viewBox="0 0 16 16"><rect x="1" y="1.5" width="11.5" height="13" fill="none" stroke="#d8363c" stroke-width="1" stroke-dasharray="1 1.1"/><path d="M15,0.5 V15.5" stroke="#d8363c" stroke-width="2"/><path d="M4,8 H11 M9,6 L11,8 L9,10" fill="none" stroke="#d8363c" stroke-width="1.1"/></svg>
<svg class="abs" style="left:1350.3px;top:295.3px" width="16" height="16" viewBox="0 0 16 16"><rect x="0.6" y="0.6" width="14.8" height="14.8" fill="none" stroke="#8e8e8e" stroke-width="1"/><path d="M4,6 H12 M5.5,4.5 L4,6 L5.5,7.5 M4,10.5 H12 M10.5,9 L12,10.5 L10.5,12" fill="none" stroke="#9a9a9a" stroke-width="1"/></svg>
<svg class="abs" style="left:1266.2px;top:322.8px" width="16" height="16" viewBox="0 0 16 16"><rect x="1.5" y="3.5" width="13" height="11.5" fill="none" stroke="#d8363c" stroke-width="1" stroke-dasharray="1 1.1"/><path d="M0.5,1 H15.5" stroke="#d8363c" stroke-width="2"/><path d="M8,5 V12 M6,7 L8,5 L10,7" fill="none" stroke="#d8363c" stroke-width="1.1"/></svg>
<svg class="abs" style="left:1308.2px;top:322.8px" width="16" height="16" viewBox="0 0 16 16"><rect x="1.5" y="1" width="13" height="11.5" fill="none" stroke="#d8363c" stroke-width="1" stroke-dasharray="1 1.1"/><path d="M0.5,15 H15.5" stroke="#d8363c" stroke-width="2"/><path d="M8,4 V11 M6,9 L8,11 L10,9" fill="none" stroke="#d8363c" stroke-width="1.1"/></svg>
<svg class="abs" style="left:1116.4px;top:399.1px" width="16" height="16" viewBox="0 0 16 16"><path d="M2,1 V15" stroke="#d4484e" stroke-width="1" stroke-dasharray="1 1.1"/><path d="M5,8 H13 M7.3,5.8 L5,8 L7.3,10.2" fill="none" stroke="#d4484e" stroke-width="1.1"/></svg>
<svg class="abs" style="left:1158.3px;top:399.1px" width="16" height="16" viewBox="0 0 16 16"><path d="M8,1 V15" stroke="#d4484e" stroke-width="1" stroke-dasharray="1 1.1"/><path d="M1,8 H6.3 M4.3,6 L6.3,8 L4.3,10 M15,8 H9.7 M11.7,6 L9.7,8 L11.7,10" fill="none" stroke="#d4484e" stroke-width="1.1"/></svg>
<svg class="abs" style="left:1199.9px;top:399.1px" width="16" height="16" viewBox="0 0 16 16"><path d="M14,1 V15" stroke="#d4484e" stroke-width="1" stroke-dasharray="1 1.1"/><path d="M3,8 H11 M8.7,5.8 L11,8 L8.7,10.2" fill="none" stroke="#d4484e" stroke-width="1.1"/></svg>
<svg class="abs" style="left:1116.4px;top:427.6px" width="16" height="16" viewBox="0 0 16 16"><path d="M1,2 H15" stroke="#d4484e" stroke-width="1" stroke-dasharray="1 1.1"/><path d="M8,5 V13 M5.8,7.3 L8,5 L10.2,7.3" fill="none" stroke="#d4484e" stroke-width="1.1"/></svg>
<svg class="abs" style="left:1158.3px;top:427.6px" width="16" height="16" viewBox="0 0 16 16"><path d="M1,8 H15" stroke="#d4484e" stroke-width="1" stroke-dasharray="1 1.1"/><path d="M8,1 V6.3 M6,4.3 L8,6.3 L10,4.3 M8,15 V9.7 M6,11.7 L8,9.7 L10,11.7" fill="none" stroke="#d4484e" stroke-width="1.1"/></svg>
<svg class="abs" style="left:1199.9px;top:427.6px" width="16" height="16" viewBox="0 0 16 16"><path d="M1,14 H15" stroke="#d4484e" stroke-width="1" stroke-dasharray="1 1.1"/><path d="M8,3 V11 M5.8,8.7 L8,11 L10.2,8.7" fill="none" stroke="#d4484e" stroke-width="1.1"/></svg>
<svg class="abs" style="left:1116.4px;top:456.3px" width="16" height="16" viewBox="0 0 16 16"><rect x="1" y="1" width="14" height="14" fill="none" stroke="#d4484e" stroke-width="1" stroke-dasharray="1 1.1"/><path d="M4,8 H12 M5.8,6.2 L4,8 L5.8,9.8 M10.2,6.2 L12,8 L10.2,9.8" fill="none" stroke="#d8363c" stroke-width="1.2"/></svg>
<svg class="abs" style="left:1158.3px;top:456.3px" width="16" height="16" viewBox="0 0 16 16"><rect x="1" y="1" width="14" height="14" fill="none" stroke="#d4484e" stroke-width="1" stroke-dasharray="1 1.1"/><path d="M8,4 V12 M6.2,5.8 L8,4 L9.8,5.8 M6.2,10.2 L8,12 L9.8,10.2" fill="none" stroke="#d8363c" stroke-width="1.2"/></svg>
<svg class="abs" style="left:1199.9px;top:456.3px" width="16" height="16" viewBox="0 0 16 16"><rect x="1" y="1" width="14" height="14" fill="none" stroke="#d4484e" stroke-width="1" stroke-dasharray="1 1.1"/><path d="M4,6.5 V4 H6.5 M9.5,4 H12 V6.5 M12,9.5 V12 H9.5 M6.5,12 H4 V9.5" fill="none" stroke="#c9767a" stroke-width="1.2"/></svg>
<svg class="abs" style="left:1266.2px;top:399.1px" width="16" height="16" viewBox="0 0 16 16"><rect x="0.6" y="0.6" width="14.8" height="14.8" rx="1.2" fill="none" stroke="#d8363c" stroke-width="1.2"/><rect x="3" y="7.5" width="5.5" height="5.5" fill="none" stroke="#d8363c" stroke-width="1.1"/><rect x="9.5" y="3" width="3.6" height="3.6" fill="none" stroke="#d8363c" stroke-width="1.1"/></svg>
<svg class="abs" style="left:1308.2px;top:399.1px" width="16" height="16" viewBox="0 0 16 16"><rect x="0.6" y="0.6" width="14.8" height="14.8" fill="none" stroke="#8e8e8e" stroke-width="1" stroke-dasharray="1 1.1"/><rect x="3" y="7.5" width="5.5" height="5.5" fill="none" stroke="#9a9a9a" stroke-width="1"/><rect x="9.5" y="3" width="3.6" height="3.6" fill="none" stroke="#9a9a9a" stroke-width="1"/></svg>
<svg class="abs" style="left:1350.3px;top:399.1px" width="16" height="16" viewBox="0 0 16 16"><path d="M4,3 V1.8 Q4,0.6 5.2,0.6 H14.2 Q15.4,0.6 15.4,1.8 V10.8 Q15.4,12 14.2,12 H13" fill="none" stroke="#d8363c" stroke-width="1.1"/><rect x="0.6" y="3.4" width="12" height="12" rx="1.2" fill="none" stroke="#d8363c" stroke-width="1.1"/><path d="M4,9.5 L6,11.5 L9.5,7.5" fill="none" stroke="#b35a5e" stroke-width="1.1"/></svg>
<svg class="abs" style="left:1266.2px;top:427.6px" width="16" height="16" viewBox="0 0 16 16"><rect x="1" y="1" width="14" height="3.4" rx="1" fill="#d8363c"/><path d="M8,15 V7 M5.8,9.3 L8,7 L10.2,9.3" fill="none" stroke="#d8363c" stroke-width="1.1"/></svg>
<svg class="abs" style="left:1308.2px;top:427.6px" width="16" height="16" viewBox="0 0 16 16"><rect x="1.5" y="7" width="13" height="3" rx="0.8" fill="#d8363c"/><rect x="1.5" y="11.5" width="13" height="3" rx="0.8" fill="#d8363c"/><path d="M8,8 V1.5 M5.8,3.8 L8,1.5 L10.2,3.8" fill="none" stroke="#d8363c" stroke-width="1.1"/></svg>
<svg class="abs" style="left:1350.3px;top:427.6px" width="16" height="16" viewBox="0 0 16 16"><path d="M3.5,1.5 L13.5,9 L8,9.5 L4.2,14 Z" fill="none" stroke="#c9555a" stroke-width="1.1" stroke-linejoin="round"/></svg>
<svg class="abs" style="left:1266.2px;top:456.3px" width="16" height="16" viewBox="0 0 16 16"><rect x="1" y="11.6" width="14" height="3.4" rx="1" fill="#d8363c"/><path d="M8,1 V9 M5.8,6.7 L8,9 L10.2,6.7" fill="none" stroke="#d8363c" stroke-width="1.1"/></svg>
<svg class="abs" style="left:1308.2px;top:456.3px" width="16" height="16" viewBox="0 0 16 16"><rect x="1.5" y="1.5" width="13" height="3" rx="0.8" fill="#d8363c"/><rect x="1.5" y="6" width="13" height="3" rx="0.8" fill="#d8363c"/><path d="M8,8 V14.5 M5.8,12.2 L8,14.5 L10.2,12.2" fill="none" stroke="#d8363c" stroke-width="1.1"/></svg>
<svg class="abs" style="left:1116.4px;top:531.7px" width="16" height="16" viewBox="0 0 16 16"><rect x="6" y="1.5" width="9" height="8" rx="1" fill="#e02b30"/><rect x="1" y="6" width="9" height="8.5" rx="1" fill="#e02b30"/></svg>
<svg class="abs" style="left:1158.3px;top:531.7px" width="16" height="16" viewBox="0 0 16 16"><rect x="6.5" y="2" width="8.5" height="7.5" rx="1" fill="#e02b30"/><rect x="1.5" y="6" width="9" height="8" rx="1" fill="#e02b30"/><path d="M6.5,6 H10.5 V9.5" stroke="#fff" stroke-width="0.8" fill="none"/></svg>
<svg class="abs" style="left:1199.9px;top:531.7px" width="16" height="16" viewBox="0 0 16 16"><rect x="6" y="1.5" width="9" height="8" rx="1" fill="#e02b30"/><rect x="1" y="6" width="9" height="8.5" rx="1" fill="#e02b30"/><rect x="6.6" y="6.6" width="2.8" height="2.4" fill="#fff"/></svg>
<svg class="abs" style="left:1116.4px;top:558.7px" width="16" height="16" viewBox="0 0 16 16"><rect x="6.5" y="1.5" width="8.5" height="8" fill="none" stroke="#d4484e" stroke-width="1" stroke-dasharray="1 1.1"/><rect x="1" y="6" width="9" height="8.5" rx="1" fill="#e02b30"/></svg>
<svg class="abs" style="left:1158.3px;top:558.7px" width="16" height="16" viewBox="0 0 16 16"><rect x="6.5" y="1.5" width="8.5" height="8" fill="none" stroke="#d4484e" stroke-width="1" stroke-dasharray="1 1.1"/><rect x="1.5" y="6" width="8.5" height="8.5" fill="none" stroke="#d4484e" stroke-width="1" stroke-dasharray="1 1.1"/><path d="M8,4 V12 M6.5,8 H9.5" stroke="#d4484e" stroke-width="1"/></svg>
<svg class="abs" style="left:1199.9px;top:558.7px" width="16" height="16" viewBox="0 0 16 16"><rect x="3" y="3" width="10" height="10" fill="none" stroke="#777" stroke-width="1.1"/><path d="M1.5,1.5 V4.5 M1.5,11.5 V14.5 M14.5,1.5 V4.5 M14.5,11.5 V14.5 M1,3 H5 M11,3 H15 M1,13 H5 M11,13 H15" stroke="#777" stroke-width="1.1"/></svg>
<svg class="abs" style="left:1116.9px;top:588.3px" width="15" height="15" viewBox="0 0 15 15"><rect x="0.6" y="0.6" width="13.8" height="13.8" fill="none" stroke="#9a9a9a" stroke-width="1"/><text x="7.5" y="11.2" font-family="Liberation Sans" font-size="9.5" fill="#8e8e8e" text-anchor="middle">A</text></svg>
<svg class="abs" style="left:1158.3px;top:587.8px" width="16" height="16" viewBox="0 0 16 16"><circle cx="10" cy="5.5" r="4.3" fill="none" stroke="#8e8e8e" stroke-width="1"/><rect x="1" y="6" width="8.5" height="8.5" fill="#fff" stroke="#8e8e8e" stroke-width="1"/></svg>
<svg class="abs" style="left:1266.2px;top:531.7px" width="16" height="16" viewBox="0 0 16 16"><rect x="5.5" y="1" width="7.5" height="10.5" rx="1" fill="none" stroke="#d8363c" stroke-width="1.1"/><rect x="2.5" y="4" width="7.5" height="10.5" rx="1" fill="#fff" stroke="#d8363c" stroke-width="1.1"/></svg>
<svg class="abs" style="left:1308.2px;top:531.7px" width="16" height="16" viewBox="0 0 16 16"><rect x="5.5" y="1" width="7.5" height="10.5" fill="none" stroke="#9a9a9a" stroke-width="1" stroke-dasharray="1 1.1"/><rect x="2.5" y="4" width="7.5" height="10.5" rx="1" fill="#fff" stroke="#9a9a9a" stroke-width="1.1"/></svg>
<svg class="abs" style="left:1116.4px;top:659.5px" width="16" height="16" viewBox="0 0 16 16"><path d="M2,1 V15" stroke="#d4484e" stroke-width="1" stroke-dasharray="1 1.1"/><rect x="4.5" y="4" width="4" height="8" fill="none" stroke="#d8363c" stroke-width="1.1"/><path d="M10.5,8 H15 M12.5,6 L10.5,8 L12.5,10" fill="none" stroke="#d8363c" stroke-width="1.1"/></svg>
<svg class="abs" style="left:1158.3px;top:659.5px" width="16" height="16" viewBox="0 0 16 16"><path d="M14,1 V15" stroke="#d4484e" stroke-width="1" stroke-dasharray="1 1.1"/><rect x="7.5" y="4" width="4" height="8" fill="none" stroke="#d8363c" stroke-width="1.1"/><path d="M1,8 H5.5 M3.5,6 L5.5,8 L3.5,10" fill="none" stroke="#d8363c" stroke-width="1.1"/></svg>
<svg class="abs" style="left:1116.4px;top:691.5px" width="16" height="12" viewBox="0 0 16 12"><path d="M0.5,1.5 H15.5" stroke="#d4484e" stroke-width="1" stroke-dasharray="1 1.1"/><path d="M4,12 V5 M2,7 L4,5 L6,7" fill="none" stroke="#d8363c" stroke-width="1.2"/><rect x="8.5" y="4.5" width="5" height="7.5" fill="none" stroke="#d8363c" stroke-width="1.2"/></svg>
<svg class="abs" style="left:1158.3px;top:691.5px" width="16" height="12" viewBox="0 0 16 12"><path d="M0.5,11 H15.5" stroke="#d4484e" stroke-width="1" stroke-dasharray="1 1.1"/><path d="M4,1 V8 M2,6 L4,8 L6,6" fill="none" stroke="#d8363c" stroke-width="1.2"/><rect x="8.5" y="1" width="5" height="7.5" fill="none" stroke="#d8363c" stroke-width="1.2"/></svg>
<svg class="abs" style="left:1266.2px;top:665.5px" width="16" height="16" viewBox="0 0 16 16"><rect x="3" y="7" width="9" height="6" fill="none" stroke="#d8363c" stroke-width="1.1"/><path d="M3,4.5 Q7.5,0.5 12,4.5 M3,1.8 V4.8 H6" fill="none" stroke="#d8363c" stroke-width="1.1"/></svg>
<svg class="abs" style="left:1308.2px;top:665.5px" width="16" height="16" viewBox="0 0 16 16"><rect x="3" y="7" width="9" height="6" fill="none" stroke="#d8363c" stroke-width="1.1"/><path d="M3,4.5 Q7.5,0.5 12,4.5 M12,1.8 V4.8 H9" fill="none" stroke="#d8363c" stroke-width="1.1"/></svg>
<svg class="abs" style="left:1267px;top:693px" width="16" height="10" viewBox="0 0 16 10"><path d="M7,0 V10 H1 Z M9,0 V10 H15 Z" fill="#e02b30"/></svg>
<svg class="abs" style="left:1310px;top:693px" width="14" height="10" viewBox="0 0 14 10"><path d="M0,0 L13,6 H0 Z M0,8 H13 L0,14 Z" fill="#e02b30"/></svg>
<div class="t" style="left:1101px;top:649px;font-size:40.5px;line-height:48px;font-weight:500;color:rgba(255,255,255,0.92);text-shadow:2px 2px 1px rgba(95,95,95,0.78);letter-spacing:1.8px;word-spacing:1px;font-family:'Liberation Sans','Noto Sans CJK SC',sans-serif">知乎 @张先欣</div>
<div class="t" style="left:5.0px;top:711.5px;font-size:12px;line-height:16px;color:#3b3b3b;word-spacing:1px">幻灯片 第 1 张，共 1 张</div>
<svg class="abs" style="left:155.0px;top:712.5px" width="15" height="14" viewBox="0 0 15 14"><path d="M0.5,1.5 H5 Q7,1.5 7,3.5 V12.5 Q7,11 5,11 H0.5 Z" fill="none" stroke="#666" stroke-width="1"/><path d="M7,3.5 Q7,1.5 9,1.5 H11 M7,12.5 Q7,11 9,11 H13.5 V8.5" fill="none" stroke="#666" stroke-width="1"/><path d="M9.5,5.5 L11.3,7.5 L14.5,2.5" fill="none" stroke="#666" stroke-width="1.1"/></svg>
<div class="t" style="left:187.5px;top:711.5px;font-size:12px;line-height:16px;color:#3b3b3b;">中文(中国)</div>
<svg class="abs" style="left:923.5px;top:713.0px" width="12" height="12" viewBox="0 0 12 12"><path d="M4,2.5 L6,0.5 L8,2.5 M1,5 H11 M0,8 H12 M0,11 H12" fill="none" stroke="#555" stroke-width="1.1"/></svg>
<div class="t" style="left:941.0px;top:711.5px;font-size:12px;line-height:16px;color:#3b3b3b;">备注</div>
<svg class="abs" style="left:984.0px;top:713.0px" width="15" height="13" viewBox="0 0 15 13"><path d="M2,0.5 H13 Q14.5,0.5 14.5,2 V7.5 Q14.5,9 13,9 H6.5 L3.5,12 V9 H2 Q0.5,9 0.5,7.5 V2 Q0.5,0.5 2,0.5 Z" fill="#6a6a6a"/></svg>
<div class="t" style="left:1001.5px;top:711.5px;font-size:12px;line-height:16px;color:#3b3b3b;">批注</div>
<div class="abs" style="left:1045px;top:709px;width:37.5px;height:21px;background:#c6c6c6"></div>
<svg class="abs" style="left:1056.0px;top:712.5px" width="15" height="14" viewBox="0 0 15 14"><rect x="0.5" y="0.5" width="14" height="13" fill="none" stroke="#555" stroke-width="1"/><path d="M4,0.5 V13.5 M4,4 H14.5" stroke="#555" stroke-width="1"/><rect x="6" y="6" width="6" height="4" fill="none" stroke="#555" stroke-width="0.9"/></svg>
<svg class="abs" style="left:1095.0px;top:713.0px" width="14" height="13" viewBox="0 0 14 13"><rect x="0.5" y="0.5" width="5" height="4.5" fill="none" stroke="#555"/><rect x="8.5" y="0.5" width="5" height="4.5" fill="none" stroke="#555"/><rect x="0.5" y="8" width="5" height="4.5" fill="none" stroke="#555"/><rect x="8.5" y="8" width="5" height="4.5" fill="none" stroke="#555"/></svg>
<svg class="abs" style="left:1131.5px;top:712.5px" width="15" height="14" viewBox="0 0 15 14"><path d="M7.5,2 Q4,0 0.5,1 V12 Q4,11 7.5,13 Q11,11 14.5,12 V1 Q11,0 7.5,2 Z M7.5,2 V13" fill="none" stroke="#555" stroke-width="1"/><path d="M2,4 H6 M2,6.5 H6 M2,9 H6 M9,4 H13 M9,6.5 H13 M9,9 H13" stroke="#555" stroke-width="0.8"/></svg>
<svg class="abs" style="left:1170.0px;top:713.0px" width="14" height="13" viewBox="0 0 14 13"><path d="M0,1 H14" stroke="#555" stroke-width="1.3"/><rect x="1.5" y="1.5" width="11" height="6" fill="none" stroke="#555"/><path d="M7,7.5 V11.5 M3.5,12 H10.5" stroke="#555" stroke-width="1.1"/></svg>
<div class="abs" style="left:1202.5px;top:719px;width:6px;height:2px;background:#555"></div>
<div class="abs" style="left:1212px;top:719.5px;width:100px;height:1px;background:#9a9a9a"></div>
<div class="abs" style="left:1262px;top:716px;width:1px;height:8px;background:#9a9a9a"></div>
<div class="abs" style="left:1241px;top:714.5px;width:5px;height:11px;background:#6a6a6a"></div>
<svg class="abs" style="left:1316.0px;top:716.5px" width="7" height="7" viewBox="0 0 7 7"><path d="M0,3.5 H7 M3.5,0 V7" stroke="#555" stroke-width="1.6"/></svg>
<div class="t" style="left:1334.0px;top:712.0px;font-size:12.5px;line-height:16px;color:#3b3b3b;">64%</div>
<svg class="abs" style="left:1373.5px;top:713.0px" width="13" height="13" viewBox="0 0 13 13"><rect x="0.5" y="0.5" width="12" height="12" fill="none" stroke="#555"/><path d="M6.5,2 V5 M5,3.5 L6.5,2 L8,3.5 M6.5,11 V8 M5,9.5 L6.5,11 L8,9.5 M2,6.5 H5 M3.5,5 L2,6.5 L3.5,8 M11,6.5 H8 M9.5,5 L11,6.5 L9.5,8" fill="none" stroke="#555" stroke-width="0.9"/></svg>
<svg class="abs" style="left:36.3px;top:182.1px" width="92" height="52" viewBox="0 0 92 52"><g transform="scale(0.11310) translate(-172,-214.5)"><g  fill="#000">
<polygon points="381.7,254.6 398,256.4 404.8,259.8 412.5,257.7 415,261.5 427,259.8 428.7,256.4 439,255.5 443.3,258.9 456.1,258.4 472.4,260.6 480.1,256.4 490.4,254.3 500.6,257.2 504.9,259.4 508.3,253.8 521.2,253.8 534.9,252.9 540,254.6 545.1,249.5 554.5,246.9 557.1,242.7 558,235.8 562.3,229 563.1,222.1 572.5,222.5 580.3,221.3 582.8,225.5 590.5,227.3 594,233.2 595.7,235.8 600,229.8 606.8,228.1 611.1,230.7 614.5,226.4 622.2,223.8 629.9,224.7 635.9,222.1 638.5,217.8 643.6,215.6 647,217.8 652.2,221.3 653,228.1 650.5,233.2 650.8,239.2 649.1,243.5 653.9,246.4 660.7,245.2 663.3,241.8 665,245.2 670.1,245.2 672.2,251.2 669.3,254.6 669.3,259.8 665.9,260.6 663.3,258.1 659,263.2 659,268.3 657.3,271.8 660.7,275.2 659.9,280.3 665.9,284.6 674.4,284.6 674.8,290.6 662.4,293.2 661.6,299.1 666.7,300.9 665.9,306 671.8,307.7 669.3,314.5 660.7,315.4 657.3,319.7 652.2,326.8 653.9,332 660.7,336.3 665.9,341.4 665,345.7 672.7,349.1 677.8,355.1 684.7,358.5 685.5,364.5 682.1,367.1 679.6,374.8 680,380.5 692.3,375.7 697.8,373 700.5,368.5 705.3,367.9 709.4,370.2 716.9,372.3 721,376.4 725.1,377.1 734.6,373 740.1,371.2 748.3,372.3 752.4,376.4 753.8,381.2 760.6,383.2 768.8,385.3 775.6,386.6 779.7,390.7 777.7,395.5 774.3,398.9 771.5,403.7 772.2,407.1 774.9,409.9 774.3,413.3 770.2,416.7 767.4,418.1 760.6,417.4 758.6,420.1 762,424.2 765.4,426.9 762,428.3 760.6,426.3 757.9,429.7 754.5,433.8 753.8,438.6 748.3,440.6 743.5,438.6 741.5,434.5 742.2,429.7 744.2,425.6 740.1,423.5 738.1,420.1 738.7,415.3 734.6,414 725.1,414 714.8,414.6 714.2,420.1 710.7,423.5 704.6,425.6 701.9,429 697.1,433.8 695.7,438.6 699.1,442 704.6,444.7 707,450 709.4,452.9 706,454.3 697.8,454 687.3,454.7 688.1,460.7 684.7,465.8 693.2,469.2 693.2,476.1 695.8,482.9 696.7,493.2 697.5,500.9 696.7,505.2 702.7,507.7 701.8,511.2 693.2,512.9 679.6,515.5 671,515.5 667.6,518.9 663.3,518.9 662.4,515.5 655.6,517.2 653.9,520.6 638.5,522.3 631.6,524 624.8,527.4 621.4,533.4 612,536.5 600,538 590,537 584,531 580,524 578,515 581,507 584,500 587,495 590,489 588,483.5 582.8,482.9 579.4,486.4 583.7,489.8 579.4,494.1 572.5,495.8 570.8,494.1 562.3,493.2 558,488.9 552,488.1 543.4,491.5 534,497.5 534,505.2 531.4,510.3 526.3,512 528,517.2 538.3,520.6 545.1,528.3 553.7,530.9 564,531.7 563.1,536 558.8,541.1 565,543.7 568,548 567,553 570,551 573,547 576,545.5 582.8,543.7 585.4,548.5 581.7,555.2 572,558.8 563,562.5 556,564 551.1,566.1 543.4,572.1 534.9,573.8 526.3,581.5 516,583.2 510,590.9 504.1,604.6 507.5,611.5 503.2,621.8 497.2,631.2 489.5,630.3 486.1,624.3 483.5,619.2 476.7,617.5 471.5,620.9 473.2,626 479.2,626.9 480.1,630.3 470.7,637.2 468.1,645.7 472.4,649.1 472.4,653.4 463,656 456.1,661.1 445.9,657.7 444.1,651.7 436.4,659.4 435.6,664.6 433.9,671 425.3,669.7 422.7,664.6 420.2,658.6 411.6,661.1 403.1,666.3 394.5,667.1 384.2,662.8 380.8,664.6 370.5,668 362,667.1 360.3,663.7 355.1,657.7 356.8,645.7 354.3,637.2 356,627.7 365.4,628.6 375.7,631.2 382.5,632 385.9,629.5 378.2,620.9 376.5,615.8 382.5,613.2 381.7,606.4 384.2,600.4 391.1,594.4 399.6,592.7 406.5,588.4 413.3,590.1 417.6,585.8 415.9,577.3 409.9,570.4 407.3,565.3 403.1,555 404.8,554.8 401.4,548.8 403.1,544.6 409.1,540.3 411.6,536 408.2,532.6 399.6,530.9 388.5,528.3 388.5,523.2 391.9,522.3 394.5,517.2 391.9,512 394.5,505.2 397.9,500.9 400.5,497.5 415.9,497.5 416.8,500 421.9,502.6 430.5,500.9 442.4,498.3 445,495.8 443.3,488.1 439.9,481.2 443.3,477.8 445.9,468.4 452.7,460.7 462.1,457.3 464.7,445.3 467.3,438.8 476.7,438.4 477.5,436 473.2,429.6 478.4,422.7 485.2,419.3 497.2,417.6 496.5,413 496.5,402 495.5,401.3 488.7,399.6 483.5,397 478.4,398.7 469.8,395.3 459.6,394.5 445.9,391.9 430.5,387.6 419.3,382.5 415.9,385 415,379.9 404.8,373.1 394.5,367.9 385.1,361.9 380.8,354.2 372.3,343.1 365.4,338.8 360.3,330.3 359.4,324.8 361.1,314.5 367.1,315.4 378.2,300.9 378.2,280.3 374.8,272.6"/>
<polygon points="544,580.5 545.5,575 550,570.5 556,566 560.5,564 560.3,568 556.5,573.5 553,579 548,581.5"/>
<polygon points="546,609.8 549.4,618.3 544.3,623.5 539.2,620 541,615"/>
<polygon points="769.5,427.2 774.3,424.2 777.7,423.9 782.5,427.6 778.4,428.7 772.9,428.3"/>
<circle cx="781.8" cy="406.9" r="0.9"/>
<circle cx="788.9" cy="422.4" r="0.9"/>
<circle cx="765.5" cy="431" r="0.7"/>
<circle cx="802.8" cy="391" r="0.8"/>
<circle cx="704.4" cy="465.8" r="1.1"/>
<circle cx="718.9" cy="481.2" r="1.6"/>
<circle cx="732.6" cy="480.9" r="1.1"/>
<circle cx="665" cy="521.4" r="1.2"/>
<circle cx="418.5" cy="666.3" r="1.2"/>
<circle cx="474.1" cy="656" r="1.1"/>
<circle cx="743.7" cy="441.5" r="1.1"/>
<circle cx="638" cy="559.4" r="0.8"/>
<circle cx="750.4" cy="579.3" r="0.9"/>
<circle cx="771.7" cy="495.6" r="0.7"/>
</g></g></svg>
<svg class="abs" style="left:32px;top:178px" width="101" height="60" viewBox="32 178 101 60"><g fill="none" stroke="#fff" stroke-width="0.5" opacity="0.65"><polyline points="80.1,199.3 86,199.7 92.9,199.6"/><polyline points="79,199.8 76.5,202.5 74.3,205 72,205.6"/><polyline points="79,208.5 83,209.6 87.1,210.3 95.2,209.7"/><polyline points="62.7,217.8 68,216.6 74.3,216.1"/></g></svg>
<svg class="abs" style="left:0;top:0" width="1402" height="732" viewBox="0 0 1402 732">
<g id="mapshape" fill="#000">
<polygon points="381.7,254.6 398,256.4 404.8,259.8 412.5,257.7 415,261.5 427,259.8 428.7,256.4 439,255.5 443.3,258.9 456.1,258.4 472.4,260.6 480.1,256.4 490.4,254.3 500.6,257.2 504.9,259.4 508.3,253.8 521.2,253.8 534.9,252.9 540,254.6 545.1,249.5 554.5,246.9 557.1,242.7 558,235.8 562.3,229 563.1,222.1 572.5,222.5 580.3,221.3 582.8,225.5 590.5,227.3 594,233.2 595.7,235.8 600,229.8 606.8,228.1 611.1,230.7 614.5,226.4 622.2,223.8 629.9,224.7 635.9,222.1 638.5,217.8 643.6,215.6 647,217.8 652.2,221.3 653,228.1 650.5,233.2 650.8,239.2 649.1,243.5 653.9,246.4 660.7,245.2 663.3,241.8 665,245.2 670.1,245.2 672.2,251.2 669.3,254.6 669.3,259.8 665.9,260.6 663.3,258.1 659,263.2 659,268.3 657.3,271.8 660.7,275.2 659.9,280.3 665.9,284.6 674.4,284.6 674.8,290.6 662.4,293.2 661.6,299.1 666.7,300.9 665.9,306 671.8,307.7 669.3,314.5 660.7,315.4 657.3,319.7 652.2,326.8 653.9,332 660.7,336.3 665.9,341.4 665,345.7 672.7,349.1 677.8,355.1 684.7,358.5 685.5,364.5 682.1,367.1 679.6,374.8 680,380.5 692.3,375.7 697.8,373 700.5,368.5 705.3,367.9 709.4,370.2 716.9,372.3 721,376.4 725.1,377.1 734.6,373 740.1,371.2 748.3,372.3 752.4,376.4 753.8,381.2 760.6,383.2 768.8,385.3 775.6,386.6 779.7,390.7 777.7,395.5 774.3,398.9 771.5,403.7 772.2,407.1 774.9,409.9 774.3,413.3 770.2,416.7 767.4,418.1 760.6,417.4 758.6,420.1 762,424.2 765.4,426.9 762,428.3 760.6,426.3 757.9,429.7 754.5,433.8 753.8,438.6 748.3,440.6 743.5,438.6 741.5,434.5 742.2,429.7 744.2,425.6 740.1,423.5 738.1,420.1 738.7,415.3 734.6,414 725.1,414 714.8,414.6 714.2,420.1 710.7,423.5 704.6,425.6 701.9,429 697.1,433.8 695.7,438.6 699.1,442 704.6,444.7 707,450 709.4,452.9 706,454.3 697.8,454 687.3,454.7 688.1,460.7 684.7,465.8 693.2,469.2 693.2,476.1 695.8,482.9 696.7,493.2 697.5,500.9 696.7,505.2 702.7,507.7 701.8,511.2 693.2,512.9 679.6,515.5 671,515.5 667.6,518.9 663.3,518.9 662.4,515.5 655.6,517.2 653.9,520.6 638.5,522.3 631.6,524 624.8,527.4 621.4,533.4 612,536.5 600,538 590,537 584,531 580,524 578,515 581,507 584,500 587,495 590,489 588,483.5 582.8,482.9 579.4,486.4 583.7,489.8 579.4,494.1 572.5,495.8 570.8,494.1 562.3,493.2 558,488.9 552,488.1 543.4,491.5 534,497.5 534,505.2 531.4,510.3 526.3,512 528,517.2 538.3,520.6 545.1,528.3 553.7,530.9 564,531.7 563.1,536 558.8,541.1 565,543.7 568,548 567,553 570,551 573,547 576,545.5 582.8,543.7 585.4,548.5 581.7,555.2 572,558.8 563,562.5 556,564 551.1,566.1 543.4,572.1 534.9,573.8 526.3,581.5 516,583.2 510,590.9 504.1,604.6 507.5,611.5 503.2,621.8 497.2,631.2 489.5,630.3 486.1,624.3 483.5,619.2 476.7,617.5 471.5,620.9 473.2,626 479.2,626.9 480.1,630.3 470.7,637.2 468.1,645.7 472.4,649.1 472.4,653.4 463,656 456.1,661.1 445.9,657.7 444.1,651.7 436.4,659.4 435.6,664.6 433.9,671 425.3,669.7 422.7,664.6 420.2,658.6 411.6,661.1 403.1,666.3 394.5,667.1 384.2,662.8 380.8,664.6 370.5,668 362,667.1 360.3,663.7 355.1,657.7 356.8,645.7 354.3,637.2 356,627.7 365.4,628.6 375.7,631.2 382.5,632 385.9,629.5 378.2,620.9 376.5,615.8 382.5,613.2 381.7,606.4 384.2,600.4 391.1,594.4 399.6,592.7 406.5,588.4 413.3,590.1 417.6,585.8 415.9,577.3 409.9,570.4 407.3,565.3 403.1,555 404.8,554.8 401.4,548.8 403.1,544.6 409.1,540.3 411.6,536 408.2,532.6 399.6,530.9 388.5,528.3 388.5,523.2 391.9,522.3 394.5,517.2 391.9,512 394.5,505.2 397.9,500.9 400.5,497.5 415.9,497.5 416.8,500 421.9,502.6 430.5,500.9 442.4,498.3 445,495.8 443.3,488.1 439.9,481.2 443.3,477.8 445.9,468.4 452.7,460.7 462.1,457.3 464.7,445.3 467.3,438.8 476.7,438.4 477.5,436 473.2,429.6 478.4,422.7 485.2,419.3 497.2,417.6 496.5,413 496.5,402 495.5,401.3 488.7,399.6 483.5,397 478.4,398.7 469.8,395.3 459.6,394.5 445.9,391.9 430.5,387.6 419.3,382.5 415.9,385 415,379.9 404.8,373.1 394.5,367.9 385.1,361.9 380.8,354.2 372.3,343.1 365.4,338.8 360.3,330.3 359.4,324.8 361.1,314.5 367.1,315.4 378.2,300.9 378.2,280.3 374.8,272.6"/>
<polygon points="544,580.5 545.5,575 550,570.5 556,566 560.5,564 560.3,568 556.5,573.5 553,579 548,581.5"/>
<polygon points="546,609.8 549.4,618.3 544.3,623.5 539.2,620 541,615"/>
<polygon points="769.5,427.2 774.3,424.2 777.7,423.9 782.5,427.6 778.4,428.7 772.9,428.3"/>
<circle cx="781.8" cy="406.9" r="0.9"/>
<circle cx="788.9" cy="422.4" r="0.9"/>
<circle cx="765.5" cy="431" r="0.7"/>
<circle cx="802.8" cy="391" r="0.8"/>
<circle cx="704.4" cy="465.8" r="1.1"/>
<circle cx="718.9" cy="481.2" r="1.6"/>
<circle cx="732.6" cy="480.9" r="1.1"/>
<circle cx="665" cy="521.4" r="1.2"/>
<circle cx="418.5" cy="666.3" r="1.2"/>
<circle cx="474.1" cy="656" r="1.1"/>
<circle cx="743.7" cy="441.5" r="1.1"/>
<circle cx="638" cy="559.4" r="0.8"/>
<circle cx="750.4" cy="579.3" r="0.9"/>
<circle cx="771.7" cy="495.6" r="0.7"/>
</g>
<g fill="none" stroke="#d9d9d9" stroke-width="0.7" opacity="0.85">
<polyline points="556,246.5 560,247 563,249.5 567,249 571,251.5 575,250.5 578,253 574,256 577,258.5 582,258 585,261 583,266 587,271 584,277 580,283 581,289 577,295 578,302 575,310 573,318 572,326 574,334 577,341 579,349 577,357 573,362 567,364.5"/>
<polyline points="540,366 552,365 560,367.5 568,366 575,368 583,367 592,369 600,371 608,370.5 616,372.5 624,372 631,369 638,367.5 645,369 650,374 652,381"/>
<polyline points="652,381 660,378 666,372 672,376 678,378"/>
<polyline points="497,403 503,407 509,404.5 515,408.5 522,408 528,411 534,410.5 541,413 548,414.5 556,414"/>
<polyline points="536,383 538,392 535,401 538,410 540,420 537,432 540,440 546,447 552,454 556,460"/>
<polyline points="556,436 552,446 548,456 544,462 538,468 534,476 531,484 529,493"/>
<polyline points="575,440 583,444 590,447 598,446 606,450 614,452 622,451 630,454 640,452 650,455 657,452"/>
</g>
<g fill="none" stroke="#777" stroke-width="0.6" stroke-dasharray="1.5 1.5" opacity="0.6">
<polyline points="497,509 495,517 492,524 488,530 480,534 470,538 460,542 448,546 438,549 430,553"/>
</g><g id="sel" fill="none" stroke="#8a8a8a" stroke-width="1.15">
<rect x="357.7" y="244.4" width="230.8" height="168.0"/>
<line x1="473.1" y1="218.5" x2="473.1" y2="244.4"/>
<rect x="554.5" y="214.4" width="131.9" height="168.9"/>
<line x1="620.5" y1="189.7" x2="620.5" y2="214.4"/>
<rect x="532.3" y="364.2" width="272.2" height="95.3"/>
<line x1="668.4" y1="339.3" x2="668.4" y2="364.2"/>
<rect x="386.8" y="403.4" width="170.7" height="142.9"/>
<line x1="472.1" y1="377.8" x2="472.1" y2="403.4"/>
<rect x="352.6" y="505.2" width="234.8" height="167.1"/>
<line x1="470.0" y1="480.8" x2="470.0" y2="505.2"/>
<rect x="524.6" y="432.5" width="138.7" height="66.7"/>
<line x1="594.0" y1="407.0" x2="594.0" y2="432.5"/>
<rect x="612.3" y="448.4" width="160.2" height="133.1"/>
<line x1="692.4" y1="423.1" x2="692.4" y2="448.4"/>
<rect x="593.4" y="478.0" width="50.1" height="32.4"/>
<line x1="618.5" y1="454.3" x2="618.5" y2="478.0"/>
<rect x="576.0" y="521.0" width="42.2" height="16.6"/>
<rect x="581.4" y="501.0" width="39.2" height="28.5"/>
<line x1="601.0" y1="475.7" x2="601.0" y2="501.0"/>
<line x1="597.4" y1="537.5" x2="597.4" y2="562"/>
<line x1="601.3" y1="537.5" x2="601.3" y2="562"/>
<line x1="606.5" y1="537.5" x2="606.5" y2="562"/>
<line x1="604.2" y1="491" x2="604.2" y2="516"/>
</g>
<g id="handles" fill="#fff" stroke="#8a8a8a" stroke-width="1.5">
<circle cx="357.7" cy="244.4" r="4.6"/>
<circle cx="473.1" cy="244.4" r="4.6"/>
<circle cx="588.5" cy="244.4" r="4.6"/>
<circle cx="357.7" cy="328.4" r="4.6"/>
<circle cx="588.5" cy="328.4" r="4.6"/>
<circle cx="357.7" cy="412.4" r="4.6"/>
<circle cx="473.1" cy="412.4" r="4.6"/>
<circle cx="588.5" cy="412.4" r="4.6"/>
<circle cx="554.5" cy="214.4" r="4.6"/>
<circle cx="620.5" cy="214.4" r="4.6"/>
<circle cx="686.4" cy="214.4" r="4.6"/>
<circle cx="554.5" cy="298.9" r="4.6"/>
<circle cx="686.4" cy="298.9" r="4.6"/>
<circle cx="554.5" cy="383.3" r="4.6"/>
<circle cx="620.5" cy="383.3" r="4.6"/>
<circle cx="686.4" cy="383.3" r="4.6"/>
<circle cx="532.3" cy="364.2" r="4.6"/>
<circle cx="668.4" cy="364.2" r="4.6"/>
<circle cx="804.5" cy="364.2" r="4.6"/>
<circle cx="532.3" cy="411.9" r="4.6"/>
<circle cx="804.5" cy="411.9" r="4.6"/>
<circle cx="532.3" cy="459.5" r="4.6"/>
<circle cx="668.4" cy="459.5" r="4.6"/>
<circle cx="804.5" cy="459.5" r="4.6"/>
<circle cx="386.8" cy="403.4" r="4.6"/>
<circle cx="472.1" cy="403.4" r="4.6"/>
<circle cx="557.5" cy="403.4" r="4.6"/>
<circle cx="386.8" cy="474.8" r="4.6"/>
<circle cx="557.5" cy="474.8" r="4.6"/>
<circle cx="386.8" cy="546.3" r="4.6"/>
<circle cx="472.1" cy="546.3" r="4.6"/>
<circle cx="557.5" cy="546.3" r="4.6"/>
<circle cx="352.6" cy="505.2" r="4.6"/>
<circle cx="470.0" cy="505.2" r="4.6"/>
<circle cx="587.4" cy="505.2" r="4.6"/>
<circle cx="352.6" cy="588.8" r="4.6"/>
<circle cx="587.4" cy="588.8" r="4.6"/>
<circle cx="352.6" cy="672.3" r="4.6"/>
<circle cx="470.0" cy="672.3" r="4.6"/>
<circle cx="587.4" cy="672.3" r="4.6"/>
<circle cx="524.6" cy="432.5" r="4.6"/>
<circle cx="594.0" cy="432.5" r="4.6"/>
<circle cx="663.3" cy="432.5" r="4.6"/>
<circle cx="524.6" cy="465.9" r="4.6"/>
<circle cx="663.3" cy="465.9" r="4.6"/>
<circle cx="524.6" cy="499.2" r="4.6"/>
<circle cx="594.0" cy="499.2" r="4.6"/>
<circle cx="663.3" cy="499.2" r="4.6"/>
<circle cx="612.3" cy="448.4" r="4.6"/>
<circle cx="692.4" cy="448.4" r="4.6"/>
<circle cx="772.5" cy="448.4" r="4.6"/>
<circle cx="612.3" cy="515.0" r="4.6"/>
<circle cx="772.5" cy="515.0" r="4.6"/>
<circle cx="612.3" cy="581.5" r="4.6"/>
<circle cx="692.4" cy="581.5" r="4.6"/>
<circle cx="772.5" cy="581.5" r="4.6"/>
<circle cx="593.4" cy="478.0" r="4.6"/>
<circle cx="618.5" cy="478.0" r="4.6"/>
<circle cx="643.5" cy="478.0" r="4.6"/>
<circle cx="593.4" cy="494.2" r="4.6"/>
<circle cx="643.5" cy="494.2" r="4.6"/>
<circle cx="593.4" cy="510.4" r="4.6"/>
<circle cx="618.5" cy="510.4" r="4.6"/>
<circle cx="643.5" cy="510.4" r="4.6"/>
<circle cx="576.0" cy="521.0" r="4.6"/>
<circle cx="597.1" cy="521.0" r="4.6"/>
<circle cx="618.2" cy="521.0" r="4.6"/>
<circle cx="576.0" cy="529.3" r="4.6"/>
<circle cx="618.2" cy="529.3" r="4.6"/>
<circle cx="576.0" cy="537.6" r="4.6"/>
<circle cx="597.1" cy="537.6" r="4.6"/>
<circle cx="618.2" cy="537.6" r="4.6"/>
<circle cx="581.4" cy="501.0" r="4.6"/>
<circle cx="601.0" cy="501.0" r="4.6"/>
<circle cx="620.6" cy="501.0" r="4.6"/>
<circle cx="581.4" cy="515.2" r="4.6"/>
<circle cx="620.6" cy="515.2" r="4.6"/>
<circle cx="581.4" cy="529.5" r="4.6"/>
<circle cx="601.0" cy="529.5" r="4.6"/>
<circle cx="620.6" cy="529.5" r="4.6"/>
<circle cx="611.7" cy="515.4" r="4.6"/>
<circle cx="593.2" cy="492.7" r="4.6"/>
</g>
<g transform="translate(473.1,209.5) scale(1.00)"><path d="M3.34,6.55 A7.35,7.35 0 1 1 7.32,-0.64" fill="none" stroke="#8a8a8a" stroke-width="4.3"/><path d="M1.2,-1.7 L15.2,-1.7 L8.2,5.9 Z" fill="#fff" stroke="#8a8a8a" stroke-width="1.25" stroke-linejoin="miter"/><path d="M3.34,6.55 A7.35,7.35 0 1 1 7.35,0.6" fill="none" stroke="#fff" stroke-width="1.9"/></g>
<g transform="translate(620.5,180.7) scale(1.00)"><path d="M3.34,6.55 A7.35,7.35 0 1 1 7.32,-0.64" fill="none" stroke="#8a8a8a" stroke-width="4.3"/><path d="M1.2,-1.7 L15.2,-1.7 L8.2,5.9 Z" fill="#fff" stroke="#8a8a8a" stroke-width="1.25" stroke-linejoin="miter"/><path d="M3.34,6.55 A7.35,7.35 0 1 1 7.35,0.6" fill="none" stroke="#fff" stroke-width="1.9"/></g>
<g transform="translate(668.4,330.3) scale(1.00)"><path d="M3.34,6.55 A7.35,7.35 0 1 1 7.32,-0.64" fill="none" stroke="#8a8a8a" stroke-width="4.3"/><path d="M1.2,-1.7 L15.2,-1.7 L8.2,5.9 Z" fill="#fff" stroke="#8a8a8a" stroke-width="1.25" stroke-linejoin="miter"/><path d="M3.34,6.55 A7.35,7.35 0 1 1 7.35,0.6" fill="none" stroke="#fff" stroke-width="1.9"/></g>
<g transform="translate(472.1,368.8) scale(1.00)"><path d="M3.34,6.55 A7.35,7.35 0 1 1 7.32,-0.64" fill="none" stroke="#8a8a8a" stroke-width="4.3"/><path d="M1.2,-1.7 L15.2,-1.7 L8.2,5.9 Z" fill="#fff" stroke="#8a8a8a" stroke-width="1.25" stroke-linejoin="miter"/><path d="M3.34,6.55 A7.35,7.35 0 1 1 7.35,0.6" fill="none" stroke="#fff" stroke-width="1.9"/></g>
<g transform="translate(470.0,471.8) scale(1.00)"><path d="M3.34,6.55 A7.35,7.35 0 1 1 7.32,-0.64" fill="none" stroke="#8a8a8a" stroke-width="4.3"/><path d="M1.2,-1.7 L15.2,-1.7 L8.2,5.9 Z" fill="#fff" stroke="#8a8a8a" stroke-width="1.25" stroke-linejoin="miter"/><path d="M3.34,6.55 A7.35,7.35 0 1 1 7.35,0.6" fill="none" stroke="#fff" stroke-width="1.9"/></g>
<g transform="translate(594.0,398.0) scale(1.00)"><path d="M3.34,6.55 A7.35,7.35 0 1 1 7.32,-0.64" fill="none" stroke="#8a8a8a" stroke-width="4.3"/><path d="M1.2,-1.7 L15.2,-1.7 L8.2,5.9 Z" fill="#fff" stroke="#8a8a8a" stroke-width="1.25" stroke-linejoin="miter"/><path d="M3.34,6.55 A7.35,7.35 0 1 1 7.35,0.6" fill="none" stroke="#fff" stroke-width="1.9"/></g>
<g transform="translate(692.4,414.1) scale(1.00)"><path d="M3.34,6.55 A7.35,7.35 0 1 1 7.32,-0.64" fill="none" stroke="#8a8a8a" stroke-width="4.3"/><path d="M1.2,-1.7 L15.2,-1.7 L8.2,5.9 Z" fill="#fff" stroke="#8a8a8a" stroke-width="1.25" stroke-linejoin="miter"/><path d="M3.34,6.55 A7.35,7.35 0 1 1 7.35,0.6" fill="none" stroke="#fff" stroke-width="1.9"/></g>
<g transform="translate(618.5,445.3) scale(1.00)"><path d="M3.34,6.55 A7.35,7.35 0 1 1 7.32,-0.64" fill="none" stroke="#8a8a8a" stroke-width="4.3"/><path d="M1.2,-1.7 L15.2,-1.7 L8.2,5.9 Z" fill="#fff" stroke="#8a8a8a" stroke-width="1.25" stroke-linejoin="miter"/><path d="M3.34,6.55 A7.35,7.35 0 1 1 7.35,0.6" fill="none" stroke="#fff" stroke-width="1.9"/></g>
<g transform="translate(601.0,466.7) scale(1.00)"><path d="M3.34,6.55 A7.35,7.35 0 1 1 7.32,-0.64" fill="none" stroke="#8a8a8a" stroke-width="4.3"/><path d="M1.2,-1.7 L15.2,-1.7 L8.2,5.9 Z" fill="#fff" stroke="#8a8a8a" stroke-width="1.25" stroke-linejoin="miter"/><path d="M3.34,6.55 A7.35,7.35 0 1 1 7.35,0.6" fill="none" stroke="#fff" stroke-width="1.9"/></g>
<g transform="translate(604.2,485.5) scale(0.72)"><path d="M3.34,6.55 A7.35,7.35 0 1 1 7.32,-0.64" fill="none" stroke="#8a8a8a" stroke-width="4.3"/><path d="M1.2,-1.7 L15.2,-1.7 L8.2,5.9 Z" fill="#fff" stroke="#8a8a8a" stroke-width="1.25" stroke-linejoin="miter"/><path d="M3.34,6.55 A7.35,7.35 0 1 1 7.35,0.6" fill="none" stroke="#fff" stroke-width="1.9"/></g>
<g id="movecur" transform="translate(0.5,3)" fill="#fff" stroke="#8c8c8c" stroke-width="1" stroke-linejoin="round"><path d="M600,553 l5,5.5 h-3 v5 h-4 v-5 h-3 z"/><path d="M600,591 l5,-5.5 h-3 v-5 h-4 v5 h-3 z"/><path d="M586,570.5 l5.5,-5 v3 h5 v4 h-5 v3 z"/><path d="M614,565.5 l-5.5,-5 v3 h-5 v4 h5 v3 z"/><path d="M594,566 l5.5,-5 v3 h4 v4 h-4 v3 z" transform="translate(-2,12)"/><path d="M609,571.5 l-5.5,-5 v3 h-4 v4 h4 v3 z" transform="translate(2,6)"/></g></svg>
</body>
</html>
